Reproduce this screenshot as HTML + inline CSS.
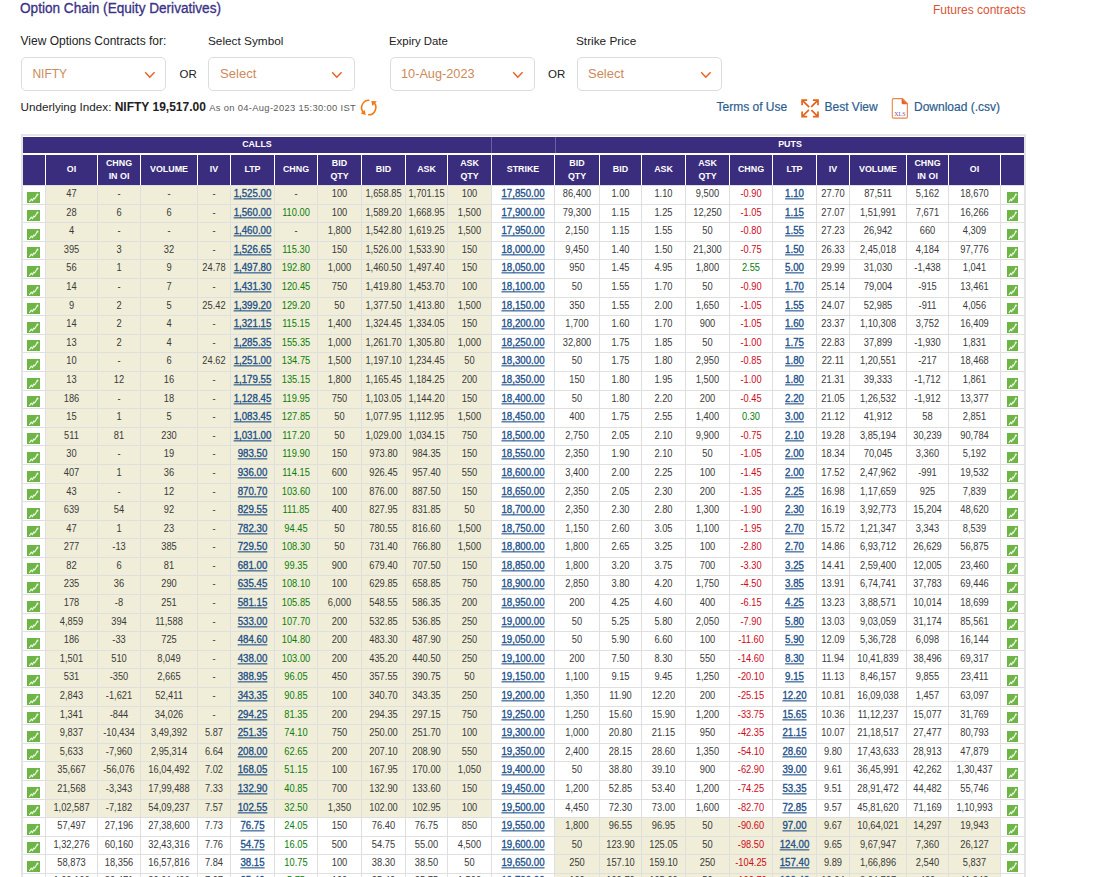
<!DOCTYPE html><html><head><meta charset="utf-8"><style>
html,body{margin:0;padding:0;background:#fff;}
body{width:1117px;height:877px;overflow:hidden;position:relative;font-family:"Liberation Sans", sans-serif;}
.a{position:absolute;white-space:nowrap;}
.c{position:absolute;text-align:center;white-space:nowrap;line-height:12px;height:12px;font-size:9.3px;color:#3a3a3a;transform:scaleY(1.08);}
.k{color:#1c4f8a;text-decoration:underline;text-decoration-thickness:1px;text-underline-offset:1.4px;font-size:9.7px;-webkit-text-stroke:0.3px #1c4f8a;}
.g{color:#0b7d0b}.r{color:#cf0a1a}
.h{position:absolute;text-align:center;color:#fff;font-weight:bold;font-size:8.9px;line-height:12.5px;white-space:nowrap;transform:scaleY(1.1);}.h2{line-height:11.9px;}
.bx{position:absolute;border:1px solid #dcdcdc;border-radius:5px;box-sizing:border-box;background:#fff;}
.sv{position:absolute;color:#cd8a5a;font-size:12px;white-space:nowrap;}
</style></head><body>
<div class="a" style="left:20px;top:1.2px;font-size:13.6px;line-height:16px;color:#3a3285;transform:scaleY(1.1);transform-origin:0 8.5px;-webkit-text-stroke:0.3px #3a3285;">Option Chain (Equity Derivatives)</div>
<div class="a" style="left:933px;top:3px;font-size:12px;line-height:14px;color:#d95436;">Futures contracts</div>
<div class="a" style="left:20.5px;top:34px;font-size:12px;line-height:14px;color:#222;">View Options Contracts for:</div>
<div class="a" style="left:208px;top:34px;font-size:11.8px;line-height:14px;color:#222;">Select Symbol</div>
<div class="a" style="left:389px;top:34px;font-size:11.4px;line-height:14px;color:#222;">Expiry Date</div>
<div class="a" style="left:576px;top:34px;font-size:11.8px;line-height:14px;color:#222;">Strike Price</div>
<div class="bx" style="left:21px;top:57px;width:145px;height:34px;"></div>
<div class="sv" style="left:32.4px;top:66.8px;line-height:14px;transform:scaleX(1.0);transform-origin:0 0;">NIFTY</div>
<svg class="a" style="left:144px;top:70.5px" width="13" height="9" viewBox="0 0 13 9"><polyline points="1.2,1.2 5.8,6.2 10.6,1.2" fill="none" stroke="#e8651f" stroke-width="1.5"/></svg>
<div class="bx" style="left:208px;top:57px;width:146.5px;height:34px;"></div>
<div class="sv" style="left:219.7px;top:66.8px;line-height:14px;transform:scaleX(1.09);transform-origin:0 0;">Select</div>
<svg class="a" style="left:330.5px;top:70.5px" width="13" height="9" viewBox="0 0 13 9"><polyline points="1.2,1.2 5.8,6.2 10.6,1.2" fill="none" stroke="#e8651f" stroke-width="1.5"/></svg>
<div class="bx" style="left:389.5px;top:57px;width:145px;height:34px;"></div>
<div class="sv" style="left:400.6px;top:66.8px;line-height:14px;transform:scaleX(1.06);transform-origin:0 0;">10-Aug-2023</div>
<svg class="a" style="left:511.5px;top:70.5px" width="13" height="9" viewBox="0 0 13 9"><polyline points="1.2,1.2 5.8,6.2 10.6,1.2" fill="none" stroke="#e8651f" stroke-width="1.5"/></svg>
<div class="bx" style="left:576.5px;top:57px;width:145.5px;height:34px;"></div>
<div class="sv" style="left:588.3px;top:66.8px;line-height:14px;transform:scaleX(1.08);transform-origin:0 0;">Select</div>
<svg class="a" style="left:700px;top:70.5px" width="13" height="9" viewBox="0 0 13 9"><polyline points="1.2,1.2 5.8,6.2 10.6,1.2" fill="none" stroke="#e8651f" stroke-width="1.5"/></svg>
<div class="a" style="left:179.5px;top:67px;font-size:11.5px;line-height:14px;color:#222;">OR</div>
<div class="a" style="left:548px;top:67px;font-size:11.5px;line-height:14px;color:#222;">OR</div>
<div class="a" style="left:20.5px;top:99.8px;font-size:11.7px;line-height:14px;color:#222;">Underlying Index: <b style="font-size:12px">NIFTY 19,517.00</b> <span style="font-size:9.4px;letter-spacing:0.33px;color:#5c5c5c;">As on 04-Aug-2023 15:30:00 IST</span></div>
<svg class="a" style="left:355px;top:96px" width="28" height="24" viewBox="0 0 28 24" fill="none" stroke="#f47a14" stroke-width="1.6"><path d="M14.3 4.3 A7.3 7.3 0 0 0 8.6 16.6"/><path d="M13.1 18.8 A7.3 7.3 0 0 0 18.4 6.1"/><path d="M5.7 17.6 L10.8 18.9 L9.7 13.9 Z" fill="#f47a14" stroke="none"/><path d="M16.3 4.9 L21.9 5.2 L17.4 10.0 Z" fill="#f47a14" stroke="none"/></svg>
<div class="a" style="left:716.5px;top:100px;font-size:12px;line-height:14px;color:#2c5e92;-webkit-text-stroke:0.2px #2c5e92;">Terms of Use</div>
<svg class="a" style="left:798px;top:96px" width="24" height="24" viewBox="0 0 24 24" fill="none" stroke="#e5631c" stroke-width="1.7" stroke-linecap="butt"><path d="M4.1 9.2V4.1h5.1M4.6 4.6l6.6 6.6"/><path d="M20 9.2V4.1h-5.1M19.5 4.6l-6.3 6.3"/><path d="M4.1 15.6v5.1h5.1M4.6 20.2l6.3-6.3"/><path d="M20 15.6v5.1h-5.1M19.5 20.2l-6.1-6.1"/></svg>
<div class="a" style="left:824.5px;top:100.3px;font-size:12px;line-height:14px;color:#2c5e92;-webkit-text-stroke:0.2px #2c5e92;">Best View</div>
<svg class="a" style="left:886px;top:94px" width="26" height="28" viewBox="0 0 26 28"><path d="M6.3 5.8 Q6.3 4.6 7.5 4.6 H16.6 L21.4 9.4 V23 Q21.4 24.1 20.2 24.1 H7.5 Q6.3 24.1 6.3 23 Z" fill="#fff" stroke="#ec8548" stroke-width="1.1"/><path d="M15.6 4.2 L21.7 10.3 H17.2 Q15.6 10.3 15.6 8.7 Z" fill="#e5632a"/><text x="13.9" y="22" text-anchor="middle" font-family="Liberation Serif" font-size="6" fill="#7d4f9a">XLS</text></svg>
<div class="a" style="left:914px;top:100.3px;font-size:12px;line-height:14px;color:#2c5e92;-webkit-text-stroke:0.2px #2c5e92;">Download (.csv)</div>
<div class="a" style="left:21px;top:134px;width:1005px;height:743px;background:#e4e4e4;"></div>
<div class="a" style="left:23px;top:136px;width:1001px;height:49px;background:#fff;"></div>
<div class="a" style="left:23px;top:185px;width:1001px;height:692px;background:#dfdfdf;"></div>
<div class="a" style="left:23px;top:137px;width:1001px;height:16px;background:#3b2d7d;"></div>
<div class="a" style="left:491px;top:137px;width:1px;height:16px;background:#6a5f9f;"></div>
<div class="a" style="left:555px;top:137px;width:1px;height:16px;background:#6a5f9f;"></div>
<div class="h" style="left:23px;top:138.2px;width:468px;">CALLS</div>
<div class="h" style="left:556px;top:138.2px;width:468px;">PUTS</div>
<div class="a" style="left:23px;top:155px;width:22px;height:30px;background:#3b2d7d;"></div>
<div class="a" style="left:46px;top:155px;width:51px;height:30px;background:#3b2d7d;"></div>
<div class="h" style="left:46px;top:162.6px;width:51px;">OI</div>
<div class="a" style="left:98px;top:155px;width:42px;height:30px;background:#3b2d7d;"></div>
<div class="h h2" style="left:98px;top:157.6px;width:42px;">CHNG<br>IN OI</div>
<div class="a" style="left:141px;top:155px;width:56px;height:30px;background:#3b2d7d;"></div>
<div class="h" style="left:141px;top:162.6px;width:56px;">VOLUME</div>
<div class="a" style="left:198px;top:155px;width:32px;height:30px;background:#3b2d7d;"></div>
<div class="h" style="left:198px;top:162.6px;width:32px;">IV</div>
<div class="a" style="left:231px;top:155px;width:43px;height:30px;background:#3b2d7d;"></div>
<div class="h" style="left:231px;top:162.6px;width:43px;">LTP</div>
<div class="a" style="left:275px;top:155px;width:42px;height:30px;background:#3b2d7d;"></div>
<div class="h" style="left:275px;top:162.6px;width:42px;">CHNG</div>
<div class="a" style="left:318px;top:155px;width:43px;height:30px;background:#3b2d7d;"></div>
<div class="h h2" style="left:318px;top:157.6px;width:43px;">BID<br>QTY</div>
<div class="a" style="left:362px;top:155px;width:43px;height:30px;background:#3b2d7d;"></div>
<div class="h" style="left:362px;top:162.6px;width:43px;">BID</div>
<div class="a" style="left:406px;top:155px;width:41px;height:30px;background:#3b2d7d;"></div>
<div class="h" style="left:406px;top:162.6px;width:41px;">ASK</div>
<div class="a" style="left:448px;top:155px;width:43px;height:30px;background:#3b2d7d;"></div>
<div class="h h2" style="left:448px;top:157.6px;width:43px;">ASK<br>QTY</div>
<div class="a" style="left:492px;top:155px;width:62px;height:30px;background:#3b2d7d;"></div>
<div class="h" style="left:492px;top:162.6px;width:62px;">STRIKE</div>
<div class="a" style="left:555px;top:155px;width:44px;height:30px;background:#3b2d7d;"></div>
<div class="h h2" style="left:555px;top:157.6px;width:44px;">BID<br>QTY</div>
<div class="a" style="left:600px;top:155px;width:41px;height:30px;background:#3b2d7d;"></div>
<div class="h" style="left:600px;top:162.6px;width:41px;">BID</div>
<div class="a" style="left:642px;top:155px;width:43px;height:30px;background:#3b2d7d;"></div>
<div class="h" style="left:642px;top:162.6px;width:43px;">ASK</div>
<div class="a" style="left:686px;top:155px;width:43px;height:30px;background:#3b2d7d;"></div>
<div class="h h2" style="left:686px;top:157.6px;width:43px;">ASK<br>QTY</div>
<div class="a" style="left:730px;top:155px;width:42px;height:30px;background:#3b2d7d;"></div>
<div class="h" style="left:730px;top:162.6px;width:42px;">CHNG</div>
<div class="a" style="left:773px;top:155px;width:43px;height:30px;background:#3b2d7d;"></div>
<div class="h" style="left:773px;top:162.6px;width:43px;">LTP</div>
<div class="a" style="left:817px;top:155px;width:32px;height:30px;background:#3b2d7d;"></div>
<div class="h" style="left:817px;top:162.6px;width:32px;">IV</div>
<div class="a" style="left:850px;top:155px;width:56px;height:30px;background:#3b2d7d;"></div>
<div class="h" style="left:850px;top:162.6px;width:56px;">VOLUME</div>
<div class="a" style="left:907px;top:155px;width:41px;height:30px;background:#3b2d7d;"></div>
<div class="h h2" style="left:907px;top:157.6px;width:41px;">CHNG<br>IN OI</div>
<div class="a" style="left:949px;top:155px;width:51px;height:30px;background:#3b2d7d;"></div>
<div class="h" style="left:949px;top:162.6px;width:51px;">OI</div>
<div class="a" style="left:1001px;top:155px;width:23px;height:30px;background:#3b2d7d;"></div>
<div class="a" style="left:23px;top:186px;width:22px;height:18px;background:#fff;"></div>
<div class="a" style="left:46px;top:186px;width:51px;height:18px;background:#f0eed8;"></div>
<div class="a" style="left:98px;top:186px;width:42px;height:18px;background:#f0eed8;"></div>
<div class="a" style="left:141px;top:186px;width:56px;height:18px;background:#f0eed8;"></div>
<div class="a" style="left:198px;top:186px;width:32px;height:18px;background:#f0eed8;"></div>
<div class="a" style="left:231px;top:186px;width:43px;height:18px;background:#f0eed8;"></div>
<div class="a" style="left:275px;top:186px;width:42px;height:18px;background:#f0eed8;"></div>
<div class="a" style="left:318px;top:186px;width:43px;height:18px;background:#f0eed8;"></div>
<div class="a" style="left:362px;top:186px;width:43px;height:18px;background:#f0eed8;"></div>
<div class="a" style="left:406px;top:186px;width:41px;height:18px;background:#f0eed8;"></div>
<div class="a" style="left:448px;top:186px;width:43px;height:18px;background:#f0eed8;"></div>
<div class="a" style="left:492px;top:186px;width:62px;height:18px;background:#fff;"></div>
<div class="a" style="left:555px;top:186px;width:44px;height:18px;background:#fff;"></div>
<div class="a" style="left:600px;top:186px;width:41px;height:18px;background:#fff;"></div>
<div class="a" style="left:642px;top:186px;width:43px;height:18px;background:#fff;"></div>
<div class="a" style="left:686px;top:186px;width:43px;height:18px;background:#fff;"></div>
<div class="a" style="left:730px;top:186px;width:42px;height:18px;background:#fff;"></div>
<div class="a" style="left:773px;top:186px;width:43px;height:18px;background:#fff;"></div>
<div class="a" style="left:817px;top:186px;width:32px;height:18px;background:#fff;"></div>
<div class="a" style="left:850px;top:186px;width:56px;height:18px;background:#fff;"></div>
<div class="a" style="left:907px;top:186px;width:41px;height:18px;background:#fff;"></div>
<div class="a" style="left:949px;top:186px;width:51px;height:18px;background:#fff;"></div>
<div class="a" style="left:1001px;top:186px;width:23px;height:18px;background:#fff;"></div>
<svg class="a" style="left:27px;top:191.7px" width="13" height="11" viewBox="0 0 13 11"><rect width="13" height="11" fill="#6db545"/><polyline points="2.60,9.50 4.30,7.20 5.50,8.70 6.70,6.10 7.60,6.90 10.30,2.80" fill="none" stroke="#f2f8ec" stroke-width="1.15" stroke-linejoin="round" stroke-linecap="round"/><circle cx="10.50" cy="2.5" r="1.0" fill="#f2f8ec"/></svg>
<svg class="a" style="left:1007px;top:191.7px" width="11" height="11" viewBox="0 0 11 11"><rect width="11" height="11" fill="#6db545"/><polyline points="2.20,9.50 3.64,7.20 4.65,8.70 5.67,6.10 6.43,6.90 8.72,2.80" fill="none" stroke="#f2f8ec" stroke-width="1.15" stroke-linejoin="round" stroke-linecap="round"/><circle cx="8.88" cy="2.5" r="1.0" fill="#f2f8ec"/></svg>
<div class="c" style="left:46px;top:187.70px;width:51px;">47</div>
<div class="c" style="left:98px;top:187.70px;width:42px;">-</div>
<div class="c" style="left:141px;top:187.70px;width:56px;">-</div>
<div class="c" style="left:198px;top:187.70px;width:32px;">-</div>
<div class="c" style="left:231px;top:187.70px;width:43px;"><span class="k">1,525.00</span></div>
<div class="c" style="left:275px;top:187.70px;width:42px;">-</div>
<div class="c" style="left:318px;top:187.70px;width:43px;">100</div>
<div class="c" style="left:362px;top:187.70px;width:43px;">1,658.85</div>
<div class="c" style="left:406px;top:187.70px;width:41px;">1,701.15</div>
<div class="c" style="left:448px;top:187.70px;width:43px;">100</div>
<div class="c" style="left:492px;top:187.70px;width:62px;"><span class="k">17,850.00</span></div>
<div class="c" style="left:555px;top:187.70px;width:44px;">86,400</div>
<div class="c" style="left:600px;top:187.70px;width:41px;">1.00</div>
<div class="c" style="left:642px;top:187.70px;width:43px;">1.10</div>
<div class="c" style="left:686px;top:187.70px;width:43px;">9,500</div>
<div class="c r" style="left:730px;top:187.70px;width:42px;">-0.90</div>
<div class="c" style="left:773px;top:187.70px;width:43px;"><span class="k">1.10</span></div>
<div class="c" style="left:817px;top:187.70px;width:32px;">27.70</div>
<div class="c" style="left:850px;top:187.70px;width:56px;">87,511</div>
<div class="c" style="left:907px;top:187.70px;width:41px;">5,162</div>
<div class="c" style="left:949px;top:187.70px;width:51px;">18,670</div>
<div class="a" style="left:23px;top:205px;width:22px;height:17px;background:#fff;"></div>
<div class="a" style="left:46px;top:205px;width:51px;height:17px;background:#f0eed8;"></div>
<div class="a" style="left:98px;top:205px;width:42px;height:17px;background:#f0eed8;"></div>
<div class="a" style="left:141px;top:205px;width:56px;height:17px;background:#f0eed8;"></div>
<div class="a" style="left:198px;top:205px;width:32px;height:17px;background:#f0eed8;"></div>
<div class="a" style="left:231px;top:205px;width:43px;height:17px;background:#f0eed8;"></div>
<div class="a" style="left:275px;top:205px;width:42px;height:17px;background:#f0eed8;"></div>
<div class="a" style="left:318px;top:205px;width:43px;height:17px;background:#f0eed8;"></div>
<div class="a" style="left:362px;top:205px;width:43px;height:17px;background:#f0eed8;"></div>
<div class="a" style="left:406px;top:205px;width:41px;height:17px;background:#f0eed8;"></div>
<div class="a" style="left:448px;top:205px;width:43px;height:17px;background:#f0eed8;"></div>
<div class="a" style="left:492px;top:205px;width:62px;height:17px;background:#fff;"></div>
<div class="a" style="left:555px;top:205px;width:44px;height:17px;background:#fff;"></div>
<div class="a" style="left:600px;top:205px;width:41px;height:17px;background:#fff;"></div>
<div class="a" style="left:642px;top:205px;width:43px;height:17px;background:#fff;"></div>
<div class="a" style="left:686px;top:205px;width:43px;height:17px;background:#fff;"></div>
<div class="a" style="left:730px;top:205px;width:42px;height:17px;background:#fff;"></div>
<div class="a" style="left:773px;top:205px;width:43px;height:17px;background:#fff;"></div>
<div class="a" style="left:817px;top:205px;width:32px;height:17px;background:#fff;"></div>
<div class="a" style="left:850px;top:205px;width:56px;height:17px;background:#fff;"></div>
<div class="a" style="left:907px;top:205px;width:41px;height:17px;background:#fff;"></div>
<div class="a" style="left:949px;top:205px;width:51px;height:17px;background:#fff;"></div>
<div class="a" style="left:1001px;top:205px;width:23px;height:17px;background:#fff;"></div>
<svg class="a" style="left:27px;top:209.7px" width="13" height="11" viewBox="0 0 13 11"><rect width="13" height="11" fill="#6db545"/><polyline points="2.60,9.50 4.30,7.20 5.50,8.70 6.70,6.10 7.60,6.90 10.30,2.80" fill="none" stroke="#f2f8ec" stroke-width="1.15" stroke-linejoin="round" stroke-linecap="round"/><circle cx="10.50" cy="2.5" r="1.0" fill="#f2f8ec"/></svg>
<svg class="a" style="left:1007px;top:209.7px" width="11" height="11" viewBox="0 0 11 11"><rect width="11" height="11" fill="#6db545"/><polyline points="2.20,9.50 3.64,7.20 4.65,8.70 5.67,6.10 6.43,6.90 8.72,2.80" fill="none" stroke="#f2f8ec" stroke-width="1.15" stroke-linejoin="round" stroke-linecap="round"/><circle cx="8.88" cy="2.5" r="1.0" fill="#f2f8ec"/></svg>
<div class="c" style="left:46px;top:206.70px;width:51px;">28</div>
<div class="c" style="left:98px;top:206.70px;width:42px;">6</div>
<div class="c" style="left:141px;top:206.70px;width:56px;">6</div>
<div class="c" style="left:198px;top:206.70px;width:32px;">-</div>
<div class="c" style="left:231px;top:206.70px;width:43px;"><span class="k">1,560.00</span></div>
<div class="c g" style="left:275px;top:206.70px;width:42px;">110.00</div>
<div class="c" style="left:318px;top:206.70px;width:43px;">100</div>
<div class="c" style="left:362px;top:206.70px;width:43px;">1,589.20</div>
<div class="c" style="left:406px;top:206.70px;width:41px;">1,668.95</div>
<div class="c" style="left:448px;top:206.70px;width:43px;">1,500</div>
<div class="c" style="left:492px;top:206.70px;width:62px;"><span class="k">17,900.00</span></div>
<div class="c" style="left:555px;top:206.70px;width:44px;">79,300</div>
<div class="c" style="left:600px;top:206.70px;width:41px;">1.15</div>
<div class="c" style="left:642px;top:206.70px;width:43px;">1.25</div>
<div class="c" style="left:686px;top:206.70px;width:43px;">12,250</div>
<div class="c r" style="left:730px;top:206.70px;width:42px;">-1.05</div>
<div class="c" style="left:773px;top:206.70px;width:43px;"><span class="k">1.15</span></div>
<div class="c" style="left:817px;top:206.70px;width:32px;">27.07</div>
<div class="c" style="left:850px;top:206.70px;width:56px;">1,51,991</div>
<div class="c" style="left:907px;top:206.70px;width:41px;">7,671</div>
<div class="c" style="left:949px;top:206.70px;width:51px;">16,266</div>
<div class="a" style="left:23px;top:223px;width:22px;height:18px;background:#fff;"></div>
<div class="a" style="left:46px;top:223px;width:51px;height:18px;background:#f0eed8;"></div>
<div class="a" style="left:98px;top:223px;width:42px;height:18px;background:#f0eed8;"></div>
<div class="a" style="left:141px;top:223px;width:56px;height:18px;background:#f0eed8;"></div>
<div class="a" style="left:198px;top:223px;width:32px;height:18px;background:#f0eed8;"></div>
<div class="a" style="left:231px;top:223px;width:43px;height:18px;background:#f0eed8;"></div>
<div class="a" style="left:275px;top:223px;width:42px;height:18px;background:#f0eed8;"></div>
<div class="a" style="left:318px;top:223px;width:43px;height:18px;background:#f0eed8;"></div>
<div class="a" style="left:362px;top:223px;width:43px;height:18px;background:#f0eed8;"></div>
<div class="a" style="left:406px;top:223px;width:41px;height:18px;background:#f0eed8;"></div>
<div class="a" style="left:448px;top:223px;width:43px;height:18px;background:#f0eed8;"></div>
<div class="a" style="left:492px;top:223px;width:62px;height:18px;background:#fff;"></div>
<div class="a" style="left:555px;top:223px;width:44px;height:18px;background:#fff;"></div>
<div class="a" style="left:600px;top:223px;width:41px;height:18px;background:#fff;"></div>
<div class="a" style="left:642px;top:223px;width:43px;height:18px;background:#fff;"></div>
<div class="a" style="left:686px;top:223px;width:43px;height:18px;background:#fff;"></div>
<div class="a" style="left:730px;top:223px;width:42px;height:18px;background:#fff;"></div>
<div class="a" style="left:773px;top:223px;width:43px;height:18px;background:#fff;"></div>
<div class="a" style="left:817px;top:223px;width:32px;height:18px;background:#fff;"></div>
<div class="a" style="left:850px;top:223px;width:56px;height:18px;background:#fff;"></div>
<div class="a" style="left:907px;top:223px;width:41px;height:18px;background:#fff;"></div>
<div class="a" style="left:949px;top:223px;width:51px;height:18px;background:#fff;"></div>
<div class="a" style="left:1001px;top:223px;width:23px;height:18px;background:#fff;"></div>
<svg class="a" style="left:27px;top:228.7px" width="13" height="11" viewBox="0 0 13 11"><rect width="13" height="11" fill="#6db545"/><polyline points="2.60,9.50 4.30,7.20 5.50,8.70 6.70,6.10 7.60,6.90 10.30,2.80" fill="none" stroke="#f2f8ec" stroke-width="1.15" stroke-linejoin="round" stroke-linecap="round"/><circle cx="10.50" cy="2.5" r="1.0" fill="#f2f8ec"/></svg>
<svg class="a" style="left:1007px;top:228.7px" width="11" height="11" viewBox="0 0 11 11"><rect width="11" height="11" fill="#6db545"/><polyline points="2.20,9.50 3.64,7.20 4.65,8.70 5.67,6.10 6.43,6.90 8.72,2.80" fill="none" stroke="#f2f8ec" stroke-width="1.15" stroke-linejoin="round" stroke-linecap="round"/><circle cx="8.88" cy="2.5" r="1.0" fill="#f2f8ec"/></svg>
<div class="c" style="left:46px;top:224.70px;width:51px;">4</div>
<div class="c" style="left:98px;top:224.70px;width:42px;">-</div>
<div class="c" style="left:141px;top:224.70px;width:56px;">-</div>
<div class="c" style="left:198px;top:224.70px;width:32px;">-</div>
<div class="c" style="left:231px;top:224.70px;width:43px;"><span class="k">1,460.00</span></div>
<div class="c" style="left:275px;top:224.70px;width:42px;">-</div>
<div class="c" style="left:318px;top:224.70px;width:43px;">1,800</div>
<div class="c" style="left:362px;top:224.70px;width:43px;">1,542.80</div>
<div class="c" style="left:406px;top:224.70px;width:41px;">1,619.25</div>
<div class="c" style="left:448px;top:224.70px;width:43px;">1,500</div>
<div class="c" style="left:492px;top:224.70px;width:62px;"><span class="k">17,950.00</span></div>
<div class="c" style="left:555px;top:224.70px;width:44px;">2,150</div>
<div class="c" style="left:600px;top:224.70px;width:41px;">1.15</div>
<div class="c" style="left:642px;top:224.70px;width:43px;">1.55</div>
<div class="c" style="left:686px;top:224.70px;width:43px;">50</div>
<div class="c r" style="left:730px;top:224.70px;width:42px;">-0.80</div>
<div class="c" style="left:773px;top:224.70px;width:43px;"><span class="k">1.55</span></div>
<div class="c" style="left:817px;top:224.70px;width:32px;">27.23</div>
<div class="c" style="left:850px;top:224.70px;width:56px;">26,942</div>
<div class="c" style="left:907px;top:224.70px;width:41px;">660</div>
<div class="c" style="left:949px;top:224.70px;width:51px;">4,309</div>
<div class="a" style="left:23px;top:242px;width:22px;height:17px;background:#fff;"></div>
<div class="a" style="left:46px;top:242px;width:51px;height:17px;background:#f0eed8;"></div>
<div class="a" style="left:98px;top:242px;width:42px;height:17px;background:#f0eed8;"></div>
<div class="a" style="left:141px;top:242px;width:56px;height:17px;background:#f0eed8;"></div>
<div class="a" style="left:198px;top:242px;width:32px;height:17px;background:#f0eed8;"></div>
<div class="a" style="left:231px;top:242px;width:43px;height:17px;background:#f0eed8;"></div>
<div class="a" style="left:275px;top:242px;width:42px;height:17px;background:#f0eed8;"></div>
<div class="a" style="left:318px;top:242px;width:43px;height:17px;background:#f0eed8;"></div>
<div class="a" style="left:362px;top:242px;width:43px;height:17px;background:#f0eed8;"></div>
<div class="a" style="left:406px;top:242px;width:41px;height:17px;background:#f0eed8;"></div>
<div class="a" style="left:448px;top:242px;width:43px;height:17px;background:#f0eed8;"></div>
<div class="a" style="left:492px;top:242px;width:62px;height:17px;background:#fff;"></div>
<div class="a" style="left:555px;top:242px;width:44px;height:17px;background:#fff;"></div>
<div class="a" style="left:600px;top:242px;width:41px;height:17px;background:#fff;"></div>
<div class="a" style="left:642px;top:242px;width:43px;height:17px;background:#fff;"></div>
<div class="a" style="left:686px;top:242px;width:43px;height:17px;background:#fff;"></div>
<div class="a" style="left:730px;top:242px;width:42px;height:17px;background:#fff;"></div>
<div class="a" style="left:773px;top:242px;width:43px;height:17px;background:#fff;"></div>
<div class="a" style="left:817px;top:242px;width:32px;height:17px;background:#fff;"></div>
<div class="a" style="left:850px;top:242px;width:56px;height:17px;background:#fff;"></div>
<div class="a" style="left:907px;top:242px;width:41px;height:17px;background:#fff;"></div>
<div class="a" style="left:949px;top:242px;width:51px;height:17px;background:#fff;"></div>
<div class="a" style="left:1001px;top:242px;width:23px;height:17px;background:#fff;"></div>
<svg class="a" style="left:27px;top:246.7px" width="13" height="11" viewBox="0 0 13 11"><rect width="13" height="11" fill="#6db545"/><polyline points="2.60,9.50 4.30,7.20 5.50,8.70 6.70,6.10 7.60,6.90 10.30,2.80" fill="none" stroke="#f2f8ec" stroke-width="1.15" stroke-linejoin="round" stroke-linecap="round"/><circle cx="10.50" cy="2.5" r="1.0" fill="#f2f8ec"/></svg>
<svg class="a" style="left:1007px;top:246.7px" width="11" height="11" viewBox="0 0 11 11"><rect width="11" height="11" fill="#6db545"/><polyline points="2.20,9.50 3.64,7.20 4.65,8.70 5.67,6.10 6.43,6.90 8.72,2.80" fill="none" stroke="#f2f8ec" stroke-width="1.15" stroke-linejoin="round" stroke-linecap="round"/><circle cx="8.88" cy="2.5" r="1.0" fill="#f2f8ec"/></svg>
<div class="c" style="left:46px;top:243.70px;width:51px;">395</div>
<div class="c" style="left:98px;top:243.70px;width:42px;">3</div>
<div class="c" style="left:141px;top:243.70px;width:56px;">32</div>
<div class="c" style="left:198px;top:243.70px;width:32px;">-</div>
<div class="c" style="left:231px;top:243.70px;width:43px;"><span class="k">1,526.65</span></div>
<div class="c g" style="left:275px;top:243.70px;width:42px;">115.30</div>
<div class="c" style="left:318px;top:243.70px;width:43px;">150</div>
<div class="c" style="left:362px;top:243.70px;width:43px;">1,526.00</div>
<div class="c" style="left:406px;top:243.70px;width:41px;">1,533.90</div>
<div class="c" style="left:448px;top:243.70px;width:43px;">150</div>
<div class="c" style="left:492px;top:243.70px;width:62px;"><span class="k">18,000.00</span></div>
<div class="c" style="left:555px;top:243.70px;width:44px;">9,450</div>
<div class="c" style="left:600px;top:243.70px;width:41px;">1.40</div>
<div class="c" style="left:642px;top:243.70px;width:43px;">1.50</div>
<div class="c" style="left:686px;top:243.70px;width:43px;">21,300</div>
<div class="c r" style="left:730px;top:243.70px;width:42px;">-0.75</div>
<div class="c" style="left:773px;top:243.70px;width:43px;"><span class="k">1.50</span></div>
<div class="c" style="left:817px;top:243.70px;width:32px;">26.33</div>
<div class="c" style="left:850px;top:243.70px;width:56px;">2,45,018</div>
<div class="c" style="left:907px;top:243.70px;width:41px;">4,184</div>
<div class="c" style="left:949px;top:243.70px;width:51px;">97,776</div>
<div class="a" style="left:23px;top:260px;width:22px;height:18px;background:#fff;"></div>
<div class="a" style="left:46px;top:260px;width:51px;height:18px;background:#f0eed8;"></div>
<div class="a" style="left:98px;top:260px;width:42px;height:18px;background:#f0eed8;"></div>
<div class="a" style="left:141px;top:260px;width:56px;height:18px;background:#f0eed8;"></div>
<div class="a" style="left:198px;top:260px;width:32px;height:18px;background:#f0eed8;"></div>
<div class="a" style="left:231px;top:260px;width:43px;height:18px;background:#f0eed8;"></div>
<div class="a" style="left:275px;top:260px;width:42px;height:18px;background:#f0eed8;"></div>
<div class="a" style="left:318px;top:260px;width:43px;height:18px;background:#f0eed8;"></div>
<div class="a" style="left:362px;top:260px;width:43px;height:18px;background:#f0eed8;"></div>
<div class="a" style="left:406px;top:260px;width:41px;height:18px;background:#f0eed8;"></div>
<div class="a" style="left:448px;top:260px;width:43px;height:18px;background:#f0eed8;"></div>
<div class="a" style="left:492px;top:260px;width:62px;height:18px;background:#fff;"></div>
<div class="a" style="left:555px;top:260px;width:44px;height:18px;background:#fff;"></div>
<div class="a" style="left:600px;top:260px;width:41px;height:18px;background:#fff;"></div>
<div class="a" style="left:642px;top:260px;width:43px;height:18px;background:#fff;"></div>
<div class="a" style="left:686px;top:260px;width:43px;height:18px;background:#fff;"></div>
<div class="a" style="left:730px;top:260px;width:42px;height:18px;background:#fff;"></div>
<div class="a" style="left:773px;top:260px;width:43px;height:18px;background:#fff;"></div>
<div class="a" style="left:817px;top:260px;width:32px;height:18px;background:#fff;"></div>
<div class="a" style="left:850px;top:260px;width:56px;height:18px;background:#fff;"></div>
<div class="a" style="left:907px;top:260px;width:41px;height:18px;background:#fff;"></div>
<div class="a" style="left:949px;top:260px;width:51px;height:18px;background:#fff;"></div>
<div class="a" style="left:1001px;top:260px;width:23px;height:18px;background:#fff;"></div>
<svg class="a" style="left:27px;top:265.7px" width="13" height="11" viewBox="0 0 13 11"><rect width="13" height="11" fill="#6db545"/><polyline points="2.60,9.50 4.30,7.20 5.50,8.70 6.70,6.10 7.60,6.90 10.30,2.80" fill="none" stroke="#f2f8ec" stroke-width="1.15" stroke-linejoin="round" stroke-linecap="round"/><circle cx="10.50" cy="2.5" r="1.0" fill="#f2f8ec"/></svg>
<svg class="a" style="left:1007px;top:265.7px" width="11" height="11" viewBox="0 0 11 11"><rect width="11" height="11" fill="#6db545"/><polyline points="2.20,9.50 3.64,7.20 4.65,8.70 5.67,6.10 6.43,6.90 8.72,2.80" fill="none" stroke="#f2f8ec" stroke-width="1.15" stroke-linejoin="round" stroke-linecap="round"/><circle cx="8.88" cy="2.5" r="1.0" fill="#f2f8ec"/></svg>
<div class="c" style="left:46px;top:261.70px;width:51px;">56</div>
<div class="c" style="left:98px;top:261.70px;width:42px;">1</div>
<div class="c" style="left:141px;top:261.70px;width:56px;">9</div>
<div class="c" style="left:198px;top:261.70px;width:32px;">24.78</div>
<div class="c" style="left:231px;top:261.70px;width:43px;"><span class="k">1,497.80</span></div>
<div class="c g" style="left:275px;top:261.70px;width:42px;">192.80</div>
<div class="c" style="left:318px;top:261.70px;width:43px;">1,000</div>
<div class="c" style="left:362px;top:261.70px;width:43px;">1,460.50</div>
<div class="c" style="left:406px;top:261.70px;width:41px;">1,497.40</div>
<div class="c" style="left:448px;top:261.70px;width:43px;">150</div>
<div class="c" style="left:492px;top:261.70px;width:62px;"><span class="k">18,050.00</span></div>
<div class="c" style="left:555px;top:261.70px;width:44px;">950</div>
<div class="c" style="left:600px;top:261.70px;width:41px;">1.45</div>
<div class="c" style="left:642px;top:261.70px;width:43px;">4.95</div>
<div class="c" style="left:686px;top:261.70px;width:43px;">1,800</div>
<div class="c g" style="left:730px;top:261.70px;width:42px;">2.55</div>
<div class="c" style="left:773px;top:261.70px;width:43px;"><span class="k">5.00</span></div>
<div class="c" style="left:817px;top:261.70px;width:32px;">29.99</div>
<div class="c" style="left:850px;top:261.70px;width:56px;">31,030</div>
<div class="c" style="left:907px;top:261.70px;width:41px;">-1,438</div>
<div class="c" style="left:949px;top:261.70px;width:51px;">1,041</div>
<div class="a" style="left:23px;top:279px;width:22px;height:18px;background:#fff;"></div>
<div class="a" style="left:46px;top:279px;width:51px;height:18px;background:#f0eed8;"></div>
<div class="a" style="left:98px;top:279px;width:42px;height:18px;background:#f0eed8;"></div>
<div class="a" style="left:141px;top:279px;width:56px;height:18px;background:#f0eed8;"></div>
<div class="a" style="left:198px;top:279px;width:32px;height:18px;background:#f0eed8;"></div>
<div class="a" style="left:231px;top:279px;width:43px;height:18px;background:#f0eed8;"></div>
<div class="a" style="left:275px;top:279px;width:42px;height:18px;background:#f0eed8;"></div>
<div class="a" style="left:318px;top:279px;width:43px;height:18px;background:#f0eed8;"></div>
<div class="a" style="left:362px;top:279px;width:43px;height:18px;background:#f0eed8;"></div>
<div class="a" style="left:406px;top:279px;width:41px;height:18px;background:#f0eed8;"></div>
<div class="a" style="left:448px;top:279px;width:43px;height:18px;background:#f0eed8;"></div>
<div class="a" style="left:492px;top:279px;width:62px;height:18px;background:#fff;"></div>
<div class="a" style="left:555px;top:279px;width:44px;height:18px;background:#fff;"></div>
<div class="a" style="left:600px;top:279px;width:41px;height:18px;background:#fff;"></div>
<div class="a" style="left:642px;top:279px;width:43px;height:18px;background:#fff;"></div>
<div class="a" style="left:686px;top:279px;width:43px;height:18px;background:#fff;"></div>
<div class="a" style="left:730px;top:279px;width:42px;height:18px;background:#fff;"></div>
<div class="a" style="left:773px;top:279px;width:43px;height:18px;background:#fff;"></div>
<div class="a" style="left:817px;top:279px;width:32px;height:18px;background:#fff;"></div>
<div class="a" style="left:850px;top:279px;width:56px;height:18px;background:#fff;"></div>
<div class="a" style="left:907px;top:279px;width:41px;height:18px;background:#fff;"></div>
<div class="a" style="left:949px;top:279px;width:51px;height:18px;background:#fff;"></div>
<div class="a" style="left:1001px;top:279px;width:23px;height:18px;background:#fff;"></div>
<svg class="a" style="left:27px;top:284.7px" width="13" height="11" viewBox="0 0 13 11"><rect width="13" height="11" fill="#6db545"/><polyline points="2.60,9.50 4.30,7.20 5.50,8.70 6.70,6.10 7.60,6.90 10.30,2.80" fill="none" stroke="#f2f8ec" stroke-width="1.15" stroke-linejoin="round" stroke-linecap="round"/><circle cx="10.50" cy="2.5" r="1.0" fill="#f2f8ec"/></svg>
<svg class="a" style="left:1007px;top:284.7px" width="11" height="11" viewBox="0 0 11 11"><rect width="11" height="11" fill="#6db545"/><polyline points="2.20,9.50 3.64,7.20 4.65,8.70 5.67,6.10 6.43,6.90 8.72,2.80" fill="none" stroke="#f2f8ec" stroke-width="1.15" stroke-linejoin="round" stroke-linecap="round"/><circle cx="8.88" cy="2.5" r="1.0" fill="#f2f8ec"/></svg>
<div class="c" style="left:46px;top:280.70px;width:51px;">14</div>
<div class="c" style="left:98px;top:280.70px;width:42px;">-</div>
<div class="c" style="left:141px;top:280.70px;width:56px;">7</div>
<div class="c" style="left:198px;top:280.70px;width:32px;">-</div>
<div class="c" style="left:231px;top:280.70px;width:43px;"><span class="k">1,431.30</span></div>
<div class="c g" style="left:275px;top:280.70px;width:42px;">120.45</div>
<div class="c" style="left:318px;top:280.70px;width:43px;">750</div>
<div class="c" style="left:362px;top:280.70px;width:43px;">1,419.80</div>
<div class="c" style="left:406px;top:280.70px;width:41px;">1,453.70</div>
<div class="c" style="left:448px;top:280.70px;width:43px;">100</div>
<div class="c" style="left:492px;top:280.70px;width:62px;"><span class="k">18,100.00</span></div>
<div class="c" style="left:555px;top:280.70px;width:44px;">50</div>
<div class="c" style="left:600px;top:280.70px;width:41px;">1.55</div>
<div class="c" style="left:642px;top:280.70px;width:43px;">1.70</div>
<div class="c" style="left:686px;top:280.70px;width:43px;">50</div>
<div class="c r" style="left:730px;top:280.70px;width:42px;">-0.90</div>
<div class="c" style="left:773px;top:280.70px;width:43px;"><span class="k">1.70</span></div>
<div class="c" style="left:817px;top:280.70px;width:32px;">25.14</div>
<div class="c" style="left:850px;top:280.70px;width:56px;">79,004</div>
<div class="c" style="left:907px;top:280.70px;width:41px;">-915</div>
<div class="c" style="left:949px;top:280.70px;width:51px;">13,461</div>
<div class="a" style="left:23px;top:298px;width:22px;height:17px;background:#fff;"></div>
<div class="a" style="left:46px;top:298px;width:51px;height:17px;background:#f0eed8;"></div>
<div class="a" style="left:98px;top:298px;width:42px;height:17px;background:#f0eed8;"></div>
<div class="a" style="left:141px;top:298px;width:56px;height:17px;background:#f0eed8;"></div>
<div class="a" style="left:198px;top:298px;width:32px;height:17px;background:#f0eed8;"></div>
<div class="a" style="left:231px;top:298px;width:43px;height:17px;background:#f0eed8;"></div>
<div class="a" style="left:275px;top:298px;width:42px;height:17px;background:#f0eed8;"></div>
<div class="a" style="left:318px;top:298px;width:43px;height:17px;background:#f0eed8;"></div>
<div class="a" style="left:362px;top:298px;width:43px;height:17px;background:#f0eed8;"></div>
<div class="a" style="left:406px;top:298px;width:41px;height:17px;background:#f0eed8;"></div>
<div class="a" style="left:448px;top:298px;width:43px;height:17px;background:#f0eed8;"></div>
<div class="a" style="left:492px;top:298px;width:62px;height:17px;background:#fff;"></div>
<div class="a" style="left:555px;top:298px;width:44px;height:17px;background:#fff;"></div>
<div class="a" style="left:600px;top:298px;width:41px;height:17px;background:#fff;"></div>
<div class="a" style="left:642px;top:298px;width:43px;height:17px;background:#fff;"></div>
<div class="a" style="left:686px;top:298px;width:43px;height:17px;background:#fff;"></div>
<div class="a" style="left:730px;top:298px;width:42px;height:17px;background:#fff;"></div>
<div class="a" style="left:773px;top:298px;width:43px;height:17px;background:#fff;"></div>
<div class="a" style="left:817px;top:298px;width:32px;height:17px;background:#fff;"></div>
<div class="a" style="left:850px;top:298px;width:56px;height:17px;background:#fff;"></div>
<div class="a" style="left:907px;top:298px;width:41px;height:17px;background:#fff;"></div>
<div class="a" style="left:949px;top:298px;width:51px;height:17px;background:#fff;"></div>
<div class="a" style="left:1001px;top:298px;width:23px;height:17px;background:#fff;"></div>
<svg class="a" style="left:27px;top:302.7px" width="13" height="11" viewBox="0 0 13 11"><rect width="13" height="11" fill="#6db545"/><polyline points="2.60,9.50 4.30,7.20 5.50,8.70 6.70,6.10 7.60,6.90 10.30,2.80" fill="none" stroke="#f2f8ec" stroke-width="1.15" stroke-linejoin="round" stroke-linecap="round"/><circle cx="10.50" cy="2.5" r="1.0" fill="#f2f8ec"/></svg>
<svg class="a" style="left:1007px;top:302.7px" width="11" height="11" viewBox="0 0 11 11"><rect width="11" height="11" fill="#6db545"/><polyline points="2.20,9.50 3.64,7.20 4.65,8.70 5.67,6.10 6.43,6.90 8.72,2.80" fill="none" stroke="#f2f8ec" stroke-width="1.15" stroke-linejoin="round" stroke-linecap="round"/><circle cx="8.88" cy="2.5" r="1.0" fill="#f2f8ec"/></svg>
<div class="c" style="left:46px;top:299.70px;width:51px;">9</div>
<div class="c" style="left:98px;top:299.70px;width:42px;">2</div>
<div class="c" style="left:141px;top:299.70px;width:56px;">5</div>
<div class="c" style="left:198px;top:299.70px;width:32px;">25.42</div>
<div class="c" style="left:231px;top:299.70px;width:43px;"><span class="k">1,399.20</span></div>
<div class="c g" style="left:275px;top:299.70px;width:42px;">129.20</div>
<div class="c" style="left:318px;top:299.70px;width:43px;">50</div>
<div class="c" style="left:362px;top:299.70px;width:43px;">1,377.50</div>
<div class="c" style="left:406px;top:299.70px;width:41px;">1,413.80</div>
<div class="c" style="left:448px;top:299.70px;width:43px;">1,500</div>
<div class="c" style="left:492px;top:299.70px;width:62px;"><span class="k">18,150.00</span></div>
<div class="c" style="left:555px;top:299.70px;width:44px;">350</div>
<div class="c" style="left:600px;top:299.70px;width:41px;">1.55</div>
<div class="c" style="left:642px;top:299.70px;width:43px;">2.00</div>
<div class="c" style="left:686px;top:299.70px;width:43px;">1,650</div>
<div class="c r" style="left:730px;top:299.70px;width:42px;">-1.05</div>
<div class="c" style="left:773px;top:299.70px;width:43px;"><span class="k">1.55</span></div>
<div class="c" style="left:817px;top:299.70px;width:32px;">24.07</div>
<div class="c" style="left:850px;top:299.70px;width:56px;">52,985</div>
<div class="c" style="left:907px;top:299.70px;width:41px;">-911</div>
<div class="c" style="left:949px;top:299.70px;width:51px;">4,056</div>
<div class="a" style="left:23px;top:316px;width:22px;height:18px;background:#fff;"></div>
<div class="a" style="left:46px;top:316px;width:51px;height:18px;background:#f0eed8;"></div>
<div class="a" style="left:98px;top:316px;width:42px;height:18px;background:#f0eed8;"></div>
<div class="a" style="left:141px;top:316px;width:56px;height:18px;background:#f0eed8;"></div>
<div class="a" style="left:198px;top:316px;width:32px;height:18px;background:#f0eed8;"></div>
<div class="a" style="left:231px;top:316px;width:43px;height:18px;background:#f0eed8;"></div>
<div class="a" style="left:275px;top:316px;width:42px;height:18px;background:#f0eed8;"></div>
<div class="a" style="left:318px;top:316px;width:43px;height:18px;background:#f0eed8;"></div>
<div class="a" style="left:362px;top:316px;width:43px;height:18px;background:#f0eed8;"></div>
<div class="a" style="left:406px;top:316px;width:41px;height:18px;background:#f0eed8;"></div>
<div class="a" style="left:448px;top:316px;width:43px;height:18px;background:#f0eed8;"></div>
<div class="a" style="left:492px;top:316px;width:62px;height:18px;background:#fff;"></div>
<div class="a" style="left:555px;top:316px;width:44px;height:18px;background:#fff;"></div>
<div class="a" style="left:600px;top:316px;width:41px;height:18px;background:#fff;"></div>
<div class="a" style="left:642px;top:316px;width:43px;height:18px;background:#fff;"></div>
<div class="a" style="left:686px;top:316px;width:43px;height:18px;background:#fff;"></div>
<div class="a" style="left:730px;top:316px;width:42px;height:18px;background:#fff;"></div>
<div class="a" style="left:773px;top:316px;width:43px;height:18px;background:#fff;"></div>
<div class="a" style="left:817px;top:316px;width:32px;height:18px;background:#fff;"></div>
<div class="a" style="left:850px;top:316px;width:56px;height:18px;background:#fff;"></div>
<div class="a" style="left:907px;top:316px;width:41px;height:18px;background:#fff;"></div>
<div class="a" style="left:949px;top:316px;width:51px;height:18px;background:#fff;"></div>
<div class="a" style="left:1001px;top:316px;width:23px;height:18px;background:#fff;"></div>
<svg class="a" style="left:27px;top:321.7px" width="13" height="11" viewBox="0 0 13 11"><rect width="13" height="11" fill="#6db545"/><polyline points="2.60,9.50 4.30,7.20 5.50,8.70 6.70,6.10 7.60,6.90 10.30,2.80" fill="none" stroke="#f2f8ec" stroke-width="1.15" stroke-linejoin="round" stroke-linecap="round"/><circle cx="10.50" cy="2.5" r="1.0" fill="#f2f8ec"/></svg>
<svg class="a" style="left:1007px;top:321.7px" width="11" height="11" viewBox="0 0 11 11"><rect width="11" height="11" fill="#6db545"/><polyline points="2.20,9.50 3.64,7.20 4.65,8.70 5.67,6.10 6.43,6.90 8.72,2.80" fill="none" stroke="#f2f8ec" stroke-width="1.15" stroke-linejoin="round" stroke-linecap="round"/><circle cx="8.88" cy="2.5" r="1.0" fill="#f2f8ec"/></svg>
<div class="c" style="left:46px;top:317.70px;width:51px;">14</div>
<div class="c" style="left:98px;top:317.70px;width:42px;">2</div>
<div class="c" style="left:141px;top:317.70px;width:56px;">4</div>
<div class="c" style="left:198px;top:317.70px;width:32px;">-</div>
<div class="c" style="left:231px;top:317.70px;width:43px;"><span class="k">1,321.15</span></div>
<div class="c g" style="left:275px;top:317.70px;width:42px;">115.15</div>
<div class="c" style="left:318px;top:317.70px;width:43px;">1,400</div>
<div class="c" style="left:362px;top:317.70px;width:43px;">1,324.45</div>
<div class="c" style="left:406px;top:317.70px;width:41px;">1,334.05</div>
<div class="c" style="left:448px;top:317.70px;width:43px;">150</div>
<div class="c" style="left:492px;top:317.70px;width:62px;"><span class="k">18,200.00</span></div>
<div class="c" style="left:555px;top:317.70px;width:44px;">1,700</div>
<div class="c" style="left:600px;top:317.70px;width:41px;">1.60</div>
<div class="c" style="left:642px;top:317.70px;width:43px;">1.70</div>
<div class="c" style="left:686px;top:317.70px;width:43px;">900</div>
<div class="c r" style="left:730px;top:317.70px;width:42px;">-1.05</div>
<div class="c" style="left:773px;top:317.70px;width:43px;"><span class="k">1.60</span></div>
<div class="c" style="left:817px;top:317.70px;width:32px;">23.37</div>
<div class="c" style="left:850px;top:317.70px;width:56px;">1,10,308</div>
<div class="c" style="left:907px;top:317.70px;width:41px;">3,752</div>
<div class="c" style="left:949px;top:317.70px;width:51px;">16,409</div>
<div class="a" style="left:23px;top:335px;width:22px;height:17px;background:#fff;"></div>
<div class="a" style="left:46px;top:335px;width:51px;height:17px;background:#f0eed8;"></div>
<div class="a" style="left:98px;top:335px;width:42px;height:17px;background:#f0eed8;"></div>
<div class="a" style="left:141px;top:335px;width:56px;height:17px;background:#f0eed8;"></div>
<div class="a" style="left:198px;top:335px;width:32px;height:17px;background:#f0eed8;"></div>
<div class="a" style="left:231px;top:335px;width:43px;height:17px;background:#f0eed8;"></div>
<div class="a" style="left:275px;top:335px;width:42px;height:17px;background:#f0eed8;"></div>
<div class="a" style="left:318px;top:335px;width:43px;height:17px;background:#f0eed8;"></div>
<div class="a" style="left:362px;top:335px;width:43px;height:17px;background:#f0eed8;"></div>
<div class="a" style="left:406px;top:335px;width:41px;height:17px;background:#f0eed8;"></div>
<div class="a" style="left:448px;top:335px;width:43px;height:17px;background:#f0eed8;"></div>
<div class="a" style="left:492px;top:335px;width:62px;height:17px;background:#fff;"></div>
<div class="a" style="left:555px;top:335px;width:44px;height:17px;background:#fff;"></div>
<div class="a" style="left:600px;top:335px;width:41px;height:17px;background:#fff;"></div>
<div class="a" style="left:642px;top:335px;width:43px;height:17px;background:#fff;"></div>
<div class="a" style="left:686px;top:335px;width:43px;height:17px;background:#fff;"></div>
<div class="a" style="left:730px;top:335px;width:42px;height:17px;background:#fff;"></div>
<div class="a" style="left:773px;top:335px;width:43px;height:17px;background:#fff;"></div>
<div class="a" style="left:817px;top:335px;width:32px;height:17px;background:#fff;"></div>
<div class="a" style="left:850px;top:335px;width:56px;height:17px;background:#fff;"></div>
<div class="a" style="left:907px;top:335px;width:41px;height:17px;background:#fff;"></div>
<div class="a" style="left:949px;top:335px;width:51px;height:17px;background:#fff;"></div>
<div class="a" style="left:1001px;top:335px;width:23px;height:17px;background:#fff;"></div>
<svg class="a" style="left:27px;top:339.7px" width="13" height="11" viewBox="0 0 13 11"><rect width="13" height="11" fill="#6db545"/><polyline points="2.60,9.50 4.30,7.20 5.50,8.70 6.70,6.10 7.60,6.90 10.30,2.80" fill="none" stroke="#f2f8ec" stroke-width="1.15" stroke-linejoin="round" stroke-linecap="round"/><circle cx="10.50" cy="2.5" r="1.0" fill="#f2f8ec"/></svg>
<svg class="a" style="left:1007px;top:339.7px" width="11" height="11" viewBox="0 0 11 11"><rect width="11" height="11" fill="#6db545"/><polyline points="2.20,9.50 3.64,7.20 4.65,8.70 5.67,6.10 6.43,6.90 8.72,2.80" fill="none" stroke="#f2f8ec" stroke-width="1.15" stroke-linejoin="round" stroke-linecap="round"/><circle cx="8.88" cy="2.5" r="1.0" fill="#f2f8ec"/></svg>
<div class="c" style="left:46px;top:336.70px;width:51px;">13</div>
<div class="c" style="left:98px;top:336.70px;width:42px;">2</div>
<div class="c" style="left:141px;top:336.70px;width:56px;">4</div>
<div class="c" style="left:198px;top:336.70px;width:32px;">-</div>
<div class="c" style="left:231px;top:336.70px;width:43px;"><span class="k">1,285.35</span></div>
<div class="c g" style="left:275px;top:336.70px;width:42px;">155.35</div>
<div class="c" style="left:318px;top:336.70px;width:43px;">1,000</div>
<div class="c" style="left:362px;top:336.70px;width:43px;">1,261.70</div>
<div class="c" style="left:406px;top:336.70px;width:41px;">1,305.80</div>
<div class="c" style="left:448px;top:336.70px;width:43px;">1,000</div>
<div class="c" style="left:492px;top:336.70px;width:62px;"><span class="k">18,250.00</span></div>
<div class="c" style="left:555px;top:336.70px;width:44px;">32,800</div>
<div class="c" style="left:600px;top:336.70px;width:41px;">1.75</div>
<div class="c" style="left:642px;top:336.70px;width:43px;">1.85</div>
<div class="c" style="left:686px;top:336.70px;width:43px;">50</div>
<div class="c r" style="left:730px;top:336.70px;width:42px;">-1.00</div>
<div class="c" style="left:773px;top:336.70px;width:43px;"><span class="k">1.75</span></div>
<div class="c" style="left:817px;top:336.70px;width:32px;">22.83</div>
<div class="c" style="left:850px;top:336.70px;width:56px;">37,899</div>
<div class="c" style="left:907px;top:336.70px;width:41px;">-1,930</div>
<div class="c" style="left:949px;top:336.70px;width:51px;">1,831</div>
<div class="a" style="left:23px;top:353px;width:22px;height:18px;background:#fff;"></div>
<div class="a" style="left:46px;top:353px;width:51px;height:18px;background:#f0eed8;"></div>
<div class="a" style="left:98px;top:353px;width:42px;height:18px;background:#f0eed8;"></div>
<div class="a" style="left:141px;top:353px;width:56px;height:18px;background:#f0eed8;"></div>
<div class="a" style="left:198px;top:353px;width:32px;height:18px;background:#f0eed8;"></div>
<div class="a" style="left:231px;top:353px;width:43px;height:18px;background:#f0eed8;"></div>
<div class="a" style="left:275px;top:353px;width:42px;height:18px;background:#f0eed8;"></div>
<div class="a" style="left:318px;top:353px;width:43px;height:18px;background:#f0eed8;"></div>
<div class="a" style="left:362px;top:353px;width:43px;height:18px;background:#f0eed8;"></div>
<div class="a" style="left:406px;top:353px;width:41px;height:18px;background:#f0eed8;"></div>
<div class="a" style="left:448px;top:353px;width:43px;height:18px;background:#f0eed8;"></div>
<div class="a" style="left:492px;top:353px;width:62px;height:18px;background:#fff;"></div>
<div class="a" style="left:555px;top:353px;width:44px;height:18px;background:#fff;"></div>
<div class="a" style="left:600px;top:353px;width:41px;height:18px;background:#fff;"></div>
<div class="a" style="left:642px;top:353px;width:43px;height:18px;background:#fff;"></div>
<div class="a" style="left:686px;top:353px;width:43px;height:18px;background:#fff;"></div>
<div class="a" style="left:730px;top:353px;width:42px;height:18px;background:#fff;"></div>
<div class="a" style="left:773px;top:353px;width:43px;height:18px;background:#fff;"></div>
<div class="a" style="left:817px;top:353px;width:32px;height:18px;background:#fff;"></div>
<div class="a" style="left:850px;top:353px;width:56px;height:18px;background:#fff;"></div>
<div class="a" style="left:907px;top:353px;width:41px;height:18px;background:#fff;"></div>
<div class="a" style="left:949px;top:353px;width:51px;height:18px;background:#fff;"></div>
<div class="a" style="left:1001px;top:353px;width:23px;height:18px;background:#fff;"></div>
<svg class="a" style="left:27px;top:358.7px" width="13" height="11" viewBox="0 0 13 11"><rect width="13" height="11" fill="#6db545"/><polyline points="2.60,9.50 4.30,7.20 5.50,8.70 6.70,6.10 7.60,6.90 10.30,2.80" fill="none" stroke="#f2f8ec" stroke-width="1.15" stroke-linejoin="round" stroke-linecap="round"/><circle cx="10.50" cy="2.5" r="1.0" fill="#f2f8ec"/></svg>
<svg class="a" style="left:1007px;top:358.7px" width="11" height="11" viewBox="0 0 11 11"><rect width="11" height="11" fill="#6db545"/><polyline points="2.20,9.50 3.64,7.20 4.65,8.70 5.67,6.10 6.43,6.90 8.72,2.80" fill="none" stroke="#f2f8ec" stroke-width="1.15" stroke-linejoin="round" stroke-linecap="round"/><circle cx="8.88" cy="2.5" r="1.0" fill="#f2f8ec"/></svg>
<div class="c" style="left:46px;top:354.70px;width:51px;">10</div>
<div class="c" style="left:98px;top:354.70px;width:42px;">-</div>
<div class="c" style="left:141px;top:354.70px;width:56px;">6</div>
<div class="c" style="left:198px;top:354.70px;width:32px;">24.62</div>
<div class="c" style="left:231px;top:354.70px;width:43px;"><span class="k">1,251.00</span></div>
<div class="c g" style="left:275px;top:354.70px;width:42px;">134.75</div>
<div class="c" style="left:318px;top:354.70px;width:43px;">1,500</div>
<div class="c" style="left:362px;top:354.70px;width:43px;">1,197.10</div>
<div class="c" style="left:406px;top:354.70px;width:41px;">1,234.45</div>
<div class="c" style="left:448px;top:354.70px;width:43px;">50</div>
<div class="c" style="left:492px;top:354.70px;width:62px;"><span class="k">18,300.00</span></div>
<div class="c" style="left:555px;top:354.70px;width:44px;">50</div>
<div class="c" style="left:600px;top:354.70px;width:41px;">1.75</div>
<div class="c" style="left:642px;top:354.70px;width:43px;">1.80</div>
<div class="c" style="left:686px;top:354.70px;width:43px;">2,950</div>
<div class="c r" style="left:730px;top:354.70px;width:42px;">-0.85</div>
<div class="c" style="left:773px;top:354.70px;width:43px;"><span class="k">1.80</span></div>
<div class="c" style="left:817px;top:354.70px;width:32px;">22.11</div>
<div class="c" style="left:850px;top:354.70px;width:56px;">1,20,551</div>
<div class="c" style="left:907px;top:354.70px;width:41px;">-217</div>
<div class="c" style="left:949px;top:354.70px;width:51px;">18,468</div>
<div class="a" style="left:23px;top:372px;width:22px;height:18px;background:#fff;"></div>
<div class="a" style="left:46px;top:372px;width:51px;height:18px;background:#f0eed8;"></div>
<div class="a" style="left:98px;top:372px;width:42px;height:18px;background:#f0eed8;"></div>
<div class="a" style="left:141px;top:372px;width:56px;height:18px;background:#f0eed8;"></div>
<div class="a" style="left:198px;top:372px;width:32px;height:18px;background:#f0eed8;"></div>
<div class="a" style="left:231px;top:372px;width:43px;height:18px;background:#f0eed8;"></div>
<div class="a" style="left:275px;top:372px;width:42px;height:18px;background:#f0eed8;"></div>
<div class="a" style="left:318px;top:372px;width:43px;height:18px;background:#f0eed8;"></div>
<div class="a" style="left:362px;top:372px;width:43px;height:18px;background:#f0eed8;"></div>
<div class="a" style="left:406px;top:372px;width:41px;height:18px;background:#f0eed8;"></div>
<div class="a" style="left:448px;top:372px;width:43px;height:18px;background:#f0eed8;"></div>
<div class="a" style="left:492px;top:372px;width:62px;height:18px;background:#fff;"></div>
<div class="a" style="left:555px;top:372px;width:44px;height:18px;background:#fff;"></div>
<div class="a" style="left:600px;top:372px;width:41px;height:18px;background:#fff;"></div>
<div class="a" style="left:642px;top:372px;width:43px;height:18px;background:#fff;"></div>
<div class="a" style="left:686px;top:372px;width:43px;height:18px;background:#fff;"></div>
<div class="a" style="left:730px;top:372px;width:42px;height:18px;background:#fff;"></div>
<div class="a" style="left:773px;top:372px;width:43px;height:18px;background:#fff;"></div>
<div class="a" style="left:817px;top:372px;width:32px;height:18px;background:#fff;"></div>
<div class="a" style="left:850px;top:372px;width:56px;height:18px;background:#fff;"></div>
<div class="a" style="left:907px;top:372px;width:41px;height:18px;background:#fff;"></div>
<div class="a" style="left:949px;top:372px;width:51px;height:18px;background:#fff;"></div>
<div class="a" style="left:1001px;top:372px;width:23px;height:18px;background:#fff;"></div>
<svg class="a" style="left:27px;top:377.7px" width="13" height="11" viewBox="0 0 13 11"><rect width="13" height="11" fill="#6db545"/><polyline points="2.60,9.50 4.30,7.20 5.50,8.70 6.70,6.10 7.60,6.90 10.30,2.80" fill="none" stroke="#f2f8ec" stroke-width="1.15" stroke-linejoin="round" stroke-linecap="round"/><circle cx="10.50" cy="2.5" r="1.0" fill="#f2f8ec"/></svg>
<svg class="a" style="left:1007px;top:377.7px" width="11" height="11" viewBox="0 0 11 11"><rect width="11" height="11" fill="#6db545"/><polyline points="2.20,9.50 3.64,7.20 4.65,8.70 5.67,6.10 6.43,6.90 8.72,2.80" fill="none" stroke="#f2f8ec" stroke-width="1.15" stroke-linejoin="round" stroke-linecap="round"/><circle cx="8.88" cy="2.5" r="1.0" fill="#f2f8ec"/></svg>
<div class="c" style="left:46px;top:373.70px;width:51px;">13</div>
<div class="c" style="left:98px;top:373.70px;width:42px;">12</div>
<div class="c" style="left:141px;top:373.70px;width:56px;">16</div>
<div class="c" style="left:198px;top:373.70px;width:32px;">-</div>
<div class="c" style="left:231px;top:373.70px;width:43px;"><span class="k">1,179.55</span></div>
<div class="c g" style="left:275px;top:373.70px;width:42px;">135.15</div>
<div class="c" style="left:318px;top:373.70px;width:43px;">1,800</div>
<div class="c" style="left:362px;top:373.70px;width:43px;">1,165.45</div>
<div class="c" style="left:406px;top:373.70px;width:41px;">1,184.25</div>
<div class="c" style="left:448px;top:373.70px;width:43px;">200</div>
<div class="c" style="left:492px;top:373.70px;width:62px;"><span class="k">18,350.00</span></div>
<div class="c" style="left:555px;top:373.70px;width:44px;">150</div>
<div class="c" style="left:600px;top:373.70px;width:41px;">1.80</div>
<div class="c" style="left:642px;top:373.70px;width:43px;">1.95</div>
<div class="c" style="left:686px;top:373.70px;width:43px;">1,500</div>
<div class="c r" style="left:730px;top:373.70px;width:42px;">-1.00</div>
<div class="c" style="left:773px;top:373.70px;width:43px;"><span class="k">1.80</span></div>
<div class="c" style="left:817px;top:373.70px;width:32px;">21.31</div>
<div class="c" style="left:850px;top:373.70px;width:56px;">39,333</div>
<div class="c" style="left:907px;top:373.70px;width:41px;">-1,712</div>
<div class="c" style="left:949px;top:373.70px;width:51px;">1,861</div>
<div class="a" style="left:23px;top:391px;width:22px;height:17px;background:#fff;"></div>
<div class="a" style="left:46px;top:391px;width:51px;height:17px;background:#f0eed8;"></div>
<div class="a" style="left:98px;top:391px;width:42px;height:17px;background:#f0eed8;"></div>
<div class="a" style="left:141px;top:391px;width:56px;height:17px;background:#f0eed8;"></div>
<div class="a" style="left:198px;top:391px;width:32px;height:17px;background:#f0eed8;"></div>
<div class="a" style="left:231px;top:391px;width:43px;height:17px;background:#f0eed8;"></div>
<div class="a" style="left:275px;top:391px;width:42px;height:17px;background:#f0eed8;"></div>
<div class="a" style="left:318px;top:391px;width:43px;height:17px;background:#f0eed8;"></div>
<div class="a" style="left:362px;top:391px;width:43px;height:17px;background:#f0eed8;"></div>
<div class="a" style="left:406px;top:391px;width:41px;height:17px;background:#f0eed8;"></div>
<div class="a" style="left:448px;top:391px;width:43px;height:17px;background:#f0eed8;"></div>
<div class="a" style="left:492px;top:391px;width:62px;height:17px;background:#fff;"></div>
<div class="a" style="left:555px;top:391px;width:44px;height:17px;background:#fff;"></div>
<div class="a" style="left:600px;top:391px;width:41px;height:17px;background:#fff;"></div>
<div class="a" style="left:642px;top:391px;width:43px;height:17px;background:#fff;"></div>
<div class="a" style="left:686px;top:391px;width:43px;height:17px;background:#fff;"></div>
<div class="a" style="left:730px;top:391px;width:42px;height:17px;background:#fff;"></div>
<div class="a" style="left:773px;top:391px;width:43px;height:17px;background:#fff;"></div>
<div class="a" style="left:817px;top:391px;width:32px;height:17px;background:#fff;"></div>
<div class="a" style="left:850px;top:391px;width:56px;height:17px;background:#fff;"></div>
<div class="a" style="left:907px;top:391px;width:41px;height:17px;background:#fff;"></div>
<div class="a" style="left:949px;top:391px;width:51px;height:17px;background:#fff;"></div>
<div class="a" style="left:1001px;top:391px;width:23px;height:17px;background:#fff;"></div>
<svg class="a" style="left:27px;top:395.7px" width="13" height="11" viewBox="0 0 13 11"><rect width="13" height="11" fill="#6db545"/><polyline points="2.60,9.50 4.30,7.20 5.50,8.70 6.70,6.10 7.60,6.90 10.30,2.80" fill="none" stroke="#f2f8ec" stroke-width="1.15" stroke-linejoin="round" stroke-linecap="round"/><circle cx="10.50" cy="2.5" r="1.0" fill="#f2f8ec"/></svg>
<svg class="a" style="left:1007px;top:395.7px" width="11" height="11" viewBox="0 0 11 11"><rect width="11" height="11" fill="#6db545"/><polyline points="2.20,9.50 3.64,7.20 4.65,8.70 5.67,6.10 6.43,6.90 8.72,2.80" fill="none" stroke="#f2f8ec" stroke-width="1.15" stroke-linejoin="round" stroke-linecap="round"/><circle cx="8.88" cy="2.5" r="1.0" fill="#f2f8ec"/></svg>
<div class="c" style="left:46px;top:392.70px;width:51px;">186</div>
<div class="c" style="left:98px;top:392.70px;width:42px;">-</div>
<div class="c" style="left:141px;top:392.70px;width:56px;">18</div>
<div class="c" style="left:198px;top:392.70px;width:32px;">-</div>
<div class="c" style="left:231px;top:392.70px;width:43px;"><span class="k">1,128.45</span></div>
<div class="c g" style="left:275px;top:392.70px;width:42px;">119.95</div>
<div class="c" style="left:318px;top:392.70px;width:43px;">750</div>
<div class="c" style="left:362px;top:392.70px;width:43px;">1,103.05</div>
<div class="c" style="left:406px;top:392.70px;width:41px;">1,144.20</div>
<div class="c" style="left:448px;top:392.70px;width:43px;">150</div>
<div class="c" style="left:492px;top:392.70px;width:62px;"><span class="k">18,400.00</span></div>
<div class="c" style="left:555px;top:392.70px;width:44px;">50</div>
<div class="c" style="left:600px;top:392.70px;width:41px;">1.80</div>
<div class="c" style="left:642px;top:392.70px;width:43px;">2.20</div>
<div class="c" style="left:686px;top:392.70px;width:43px;">200</div>
<div class="c r" style="left:730px;top:392.70px;width:42px;">-0.45</div>
<div class="c" style="left:773px;top:392.70px;width:43px;"><span class="k">2.20</span></div>
<div class="c" style="left:817px;top:392.70px;width:32px;">21.05</div>
<div class="c" style="left:850px;top:392.70px;width:56px;">1,26,532</div>
<div class="c" style="left:907px;top:392.70px;width:41px;">-1,912</div>
<div class="c" style="left:949px;top:392.70px;width:51px;">13,377</div>
<div class="a" style="left:23px;top:409px;width:22px;height:18px;background:#fff;"></div>
<div class="a" style="left:46px;top:409px;width:51px;height:18px;background:#f0eed8;"></div>
<div class="a" style="left:98px;top:409px;width:42px;height:18px;background:#f0eed8;"></div>
<div class="a" style="left:141px;top:409px;width:56px;height:18px;background:#f0eed8;"></div>
<div class="a" style="left:198px;top:409px;width:32px;height:18px;background:#f0eed8;"></div>
<div class="a" style="left:231px;top:409px;width:43px;height:18px;background:#f0eed8;"></div>
<div class="a" style="left:275px;top:409px;width:42px;height:18px;background:#f0eed8;"></div>
<div class="a" style="left:318px;top:409px;width:43px;height:18px;background:#f0eed8;"></div>
<div class="a" style="left:362px;top:409px;width:43px;height:18px;background:#f0eed8;"></div>
<div class="a" style="left:406px;top:409px;width:41px;height:18px;background:#f0eed8;"></div>
<div class="a" style="left:448px;top:409px;width:43px;height:18px;background:#f0eed8;"></div>
<div class="a" style="left:492px;top:409px;width:62px;height:18px;background:#fff;"></div>
<div class="a" style="left:555px;top:409px;width:44px;height:18px;background:#fff;"></div>
<div class="a" style="left:600px;top:409px;width:41px;height:18px;background:#fff;"></div>
<div class="a" style="left:642px;top:409px;width:43px;height:18px;background:#fff;"></div>
<div class="a" style="left:686px;top:409px;width:43px;height:18px;background:#fff;"></div>
<div class="a" style="left:730px;top:409px;width:42px;height:18px;background:#fff;"></div>
<div class="a" style="left:773px;top:409px;width:43px;height:18px;background:#fff;"></div>
<div class="a" style="left:817px;top:409px;width:32px;height:18px;background:#fff;"></div>
<div class="a" style="left:850px;top:409px;width:56px;height:18px;background:#fff;"></div>
<div class="a" style="left:907px;top:409px;width:41px;height:18px;background:#fff;"></div>
<div class="a" style="left:949px;top:409px;width:51px;height:18px;background:#fff;"></div>
<div class="a" style="left:1001px;top:409px;width:23px;height:18px;background:#fff;"></div>
<svg class="a" style="left:27px;top:414.7px" width="13" height="11" viewBox="0 0 13 11"><rect width="13" height="11" fill="#6db545"/><polyline points="2.60,9.50 4.30,7.20 5.50,8.70 6.70,6.10 7.60,6.90 10.30,2.80" fill="none" stroke="#f2f8ec" stroke-width="1.15" stroke-linejoin="round" stroke-linecap="round"/><circle cx="10.50" cy="2.5" r="1.0" fill="#f2f8ec"/></svg>
<svg class="a" style="left:1007px;top:414.7px" width="11" height="11" viewBox="0 0 11 11"><rect width="11" height="11" fill="#6db545"/><polyline points="2.20,9.50 3.64,7.20 4.65,8.70 5.67,6.10 6.43,6.90 8.72,2.80" fill="none" stroke="#f2f8ec" stroke-width="1.15" stroke-linejoin="round" stroke-linecap="round"/><circle cx="8.88" cy="2.5" r="1.0" fill="#f2f8ec"/></svg>
<div class="c" style="left:46px;top:410.70px;width:51px;">15</div>
<div class="c" style="left:98px;top:410.70px;width:42px;">1</div>
<div class="c" style="left:141px;top:410.70px;width:56px;">5</div>
<div class="c" style="left:198px;top:410.70px;width:32px;">-</div>
<div class="c" style="left:231px;top:410.70px;width:43px;"><span class="k">1,083.45</span></div>
<div class="c g" style="left:275px;top:410.70px;width:42px;">127.85</div>
<div class="c" style="left:318px;top:410.70px;width:43px;">50</div>
<div class="c" style="left:362px;top:410.70px;width:43px;">1,077.95</div>
<div class="c" style="left:406px;top:410.70px;width:41px;">1,112.95</div>
<div class="c" style="left:448px;top:410.70px;width:43px;">1,500</div>
<div class="c" style="left:492px;top:410.70px;width:62px;"><span class="k">18,450.00</span></div>
<div class="c" style="left:555px;top:410.70px;width:44px;">400</div>
<div class="c" style="left:600px;top:410.70px;width:41px;">1.75</div>
<div class="c" style="left:642px;top:410.70px;width:43px;">2.55</div>
<div class="c" style="left:686px;top:410.70px;width:43px;">1,400</div>
<div class="c g" style="left:730px;top:410.70px;width:42px;">0.30</div>
<div class="c" style="left:773px;top:410.70px;width:43px;"><span class="k">3.00</span></div>
<div class="c" style="left:817px;top:410.70px;width:32px;">21.12</div>
<div class="c" style="left:850px;top:410.70px;width:56px;">41,912</div>
<div class="c" style="left:907px;top:410.70px;width:41px;">58</div>
<div class="c" style="left:949px;top:410.70px;width:51px;">2,851</div>
<div class="a" style="left:23px;top:428px;width:22px;height:17px;background:#fff;"></div>
<div class="a" style="left:46px;top:428px;width:51px;height:17px;background:#f0eed8;"></div>
<div class="a" style="left:98px;top:428px;width:42px;height:17px;background:#f0eed8;"></div>
<div class="a" style="left:141px;top:428px;width:56px;height:17px;background:#f0eed8;"></div>
<div class="a" style="left:198px;top:428px;width:32px;height:17px;background:#f0eed8;"></div>
<div class="a" style="left:231px;top:428px;width:43px;height:17px;background:#f0eed8;"></div>
<div class="a" style="left:275px;top:428px;width:42px;height:17px;background:#f0eed8;"></div>
<div class="a" style="left:318px;top:428px;width:43px;height:17px;background:#f0eed8;"></div>
<div class="a" style="left:362px;top:428px;width:43px;height:17px;background:#f0eed8;"></div>
<div class="a" style="left:406px;top:428px;width:41px;height:17px;background:#f0eed8;"></div>
<div class="a" style="left:448px;top:428px;width:43px;height:17px;background:#f0eed8;"></div>
<div class="a" style="left:492px;top:428px;width:62px;height:17px;background:#fff;"></div>
<div class="a" style="left:555px;top:428px;width:44px;height:17px;background:#fff;"></div>
<div class="a" style="left:600px;top:428px;width:41px;height:17px;background:#fff;"></div>
<div class="a" style="left:642px;top:428px;width:43px;height:17px;background:#fff;"></div>
<div class="a" style="left:686px;top:428px;width:43px;height:17px;background:#fff;"></div>
<div class="a" style="left:730px;top:428px;width:42px;height:17px;background:#fff;"></div>
<div class="a" style="left:773px;top:428px;width:43px;height:17px;background:#fff;"></div>
<div class="a" style="left:817px;top:428px;width:32px;height:17px;background:#fff;"></div>
<div class="a" style="left:850px;top:428px;width:56px;height:17px;background:#fff;"></div>
<div class="a" style="left:907px;top:428px;width:41px;height:17px;background:#fff;"></div>
<div class="a" style="left:949px;top:428px;width:51px;height:17px;background:#fff;"></div>
<div class="a" style="left:1001px;top:428px;width:23px;height:17px;background:#fff;"></div>
<svg class="a" style="left:27px;top:432.7px" width="13" height="11" viewBox="0 0 13 11"><rect width="13" height="11" fill="#6db545"/><polyline points="2.60,9.50 4.30,7.20 5.50,8.70 6.70,6.10 7.60,6.90 10.30,2.80" fill="none" stroke="#f2f8ec" stroke-width="1.15" stroke-linejoin="round" stroke-linecap="round"/><circle cx="10.50" cy="2.5" r="1.0" fill="#f2f8ec"/></svg>
<svg class="a" style="left:1007px;top:432.7px" width="11" height="11" viewBox="0 0 11 11"><rect width="11" height="11" fill="#6db545"/><polyline points="2.20,9.50 3.64,7.20 4.65,8.70 5.67,6.10 6.43,6.90 8.72,2.80" fill="none" stroke="#f2f8ec" stroke-width="1.15" stroke-linejoin="round" stroke-linecap="round"/><circle cx="8.88" cy="2.5" r="1.0" fill="#f2f8ec"/></svg>
<div class="c" style="left:46px;top:429.70px;width:51px;">511</div>
<div class="c" style="left:98px;top:429.70px;width:42px;">81</div>
<div class="c" style="left:141px;top:429.70px;width:56px;">230</div>
<div class="c" style="left:198px;top:429.70px;width:32px;">-</div>
<div class="c" style="left:231px;top:429.70px;width:43px;"><span class="k">1,031.00</span></div>
<div class="c g" style="left:275px;top:429.70px;width:42px;">117.20</div>
<div class="c" style="left:318px;top:429.70px;width:43px;">50</div>
<div class="c" style="left:362px;top:429.70px;width:43px;">1,029.00</div>
<div class="c" style="left:406px;top:429.70px;width:41px;">1,034.15</div>
<div class="c" style="left:448px;top:429.70px;width:43px;">750</div>
<div class="c" style="left:492px;top:429.70px;width:62px;"><span class="k">18,500.00</span></div>
<div class="c" style="left:555px;top:429.70px;width:44px;">2,750</div>
<div class="c" style="left:600px;top:429.70px;width:41px;">2.05</div>
<div class="c" style="left:642px;top:429.70px;width:43px;">2.10</div>
<div class="c" style="left:686px;top:429.70px;width:43px;">9,900</div>
<div class="c r" style="left:730px;top:429.70px;width:42px;">-0.75</div>
<div class="c" style="left:773px;top:429.70px;width:43px;"><span class="k">2.10</span></div>
<div class="c" style="left:817px;top:429.70px;width:32px;">19.28</div>
<div class="c" style="left:850px;top:429.70px;width:56px;">3,85,194</div>
<div class="c" style="left:907px;top:429.70px;width:41px;">30,239</div>
<div class="c" style="left:949px;top:429.70px;width:51px;">90,784</div>
<div class="a" style="left:23px;top:446px;width:22px;height:18px;background:#fff;"></div>
<div class="a" style="left:46px;top:446px;width:51px;height:18px;background:#f0eed8;"></div>
<div class="a" style="left:98px;top:446px;width:42px;height:18px;background:#f0eed8;"></div>
<div class="a" style="left:141px;top:446px;width:56px;height:18px;background:#f0eed8;"></div>
<div class="a" style="left:198px;top:446px;width:32px;height:18px;background:#f0eed8;"></div>
<div class="a" style="left:231px;top:446px;width:43px;height:18px;background:#f0eed8;"></div>
<div class="a" style="left:275px;top:446px;width:42px;height:18px;background:#f0eed8;"></div>
<div class="a" style="left:318px;top:446px;width:43px;height:18px;background:#f0eed8;"></div>
<div class="a" style="left:362px;top:446px;width:43px;height:18px;background:#f0eed8;"></div>
<div class="a" style="left:406px;top:446px;width:41px;height:18px;background:#f0eed8;"></div>
<div class="a" style="left:448px;top:446px;width:43px;height:18px;background:#f0eed8;"></div>
<div class="a" style="left:492px;top:446px;width:62px;height:18px;background:#fff;"></div>
<div class="a" style="left:555px;top:446px;width:44px;height:18px;background:#fff;"></div>
<div class="a" style="left:600px;top:446px;width:41px;height:18px;background:#fff;"></div>
<div class="a" style="left:642px;top:446px;width:43px;height:18px;background:#fff;"></div>
<div class="a" style="left:686px;top:446px;width:43px;height:18px;background:#fff;"></div>
<div class="a" style="left:730px;top:446px;width:42px;height:18px;background:#fff;"></div>
<div class="a" style="left:773px;top:446px;width:43px;height:18px;background:#fff;"></div>
<div class="a" style="left:817px;top:446px;width:32px;height:18px;background:#fff;"></div>
<div class="a" style="left:850px;top:446px;width:56px;height:18px;background:#fff;"></div>
<div class="a" style="left:907px;top:446px;width:41px;height:18px;background:#fff;"></div>
<div class="a" style="left:949px;top:446px;width:51px;height:18px;background:#fff;"></div>
<div class="a" style="left:1001px;top:446px;width:23px;height:18px;background:#fff;"></div>
<svg class="a" style="left:27px;top:451.7px" width="13" height="11" viewBox="0 0 13 11"><rect width="13" height="11" fill="#6db545"/><polyline points="2.60,9.50 4.30,7.20 5.50,8.70 6.70,6.10 7.60,6.90 10.30,2.80" fill="none" stroke="#f2f8ec" stroke-width="1.15" stroke-linejoin="round" stroke-linecap="round"/><circle cx="10.50" cy="2.5" r="1.0" fill="#f2f8ec"/></svg>
<svg class="a" style="left:1007px;top:451.7px" width="11" height="11" viewBox="0 0 11 11"><rect width="11" height="11" fill="#6db545"/><polyline points="2.20,9.50 3.64,7.20 4.65,8.70 5.67,6.10 6.43,6.90 8.72,2.80" fill="none" stroke="#f2f8ec" stroke-width="1.15" stroke-linejoin="round" stroke-linecap="round"/><circle cx="8.88" cy="2.5" r="1.0" fill="#f2f8ec"/></svg>
<div class="c" style="left:46px;top:447.70px;width:51px;">30</div>
<div class="c" style="left:98px;top:447.70px;width:42px;">-</div>
<div class="c" style="left:141px;top:447.70px;width:56px;">19</div>
<div class="c" style="left:198px;top:447.70px;width:32px;">-</div>
<div class="c" style="left:231px;top:447.70px;width:43px;"><span class="k">983.50</span></div>
<div class="c g" style="left:275px;top:447.70px;width:42px;">119.90</div>
<div class="c" style="left:318px;top:447.70px;width:43px;">150</div>
<div class="c" style="left:362px;top:447.70px;width:43px;">973.80</div>
<div class="c" style="left:406px;top:447.70px;width:41px;">984.35</div>
<div class="c" style="left:448px;top:447.70px;width:43px;">150</div>
<div class="c" style="left:492px;top:447.70px;width:62px;"><span class="k">18,550.00</span></div>
<div class="c" style="left:555px;top:447.70px;width:44px;">2,350</div>
<div class="c" style="left:600px;top:447.70px;width:41px;">1.90</div>
<div class="c" style="left:642px;top:447.70px;width:43px;">2.10</div>
<div class="c" style="left:686px;top:447.70px;width:43px;">50</div>
<div class="c r" style="left:730px;top:447.70px;width:42px;">-1.05</div>
<div class="c" style="left:773px;top:447.70px;width:43px;"><span class="k">2.00</span></div>
<div class="c" style="left:817px;top:447.70px;width:32px;">18.34</div>
<div class="c" style="left:850px;top:447.70px;width:56px;">70,045</div>
<div class="c" style="left:907px;top:447.70px;width:41px;">3,360</div>
<div class="c" style="left:949px;top:447.70px;width:51px;">5,192</div>
<div class="a" style="left:23px;top:465px;width:22px;height:18px;background:#fff;"></div>
<div class="a" style="left:46px;top:465px;width:51px;height:18px;background:#f0eed8;"></div>
<div class="a" style="left:98px;top:465px;width:42px;height:18px;background:#f0eed8;"></div>
<div class="a" style="left:141px;top:465px;width:56px;height:18px;background:#f0eed8;"></div>
<div class="a" style="left:198px;top:465px;width:32px;height:18px;background:#f0eed8;"></div>
<div class="a" style="left:231px;top:465px;width:43px;height:18px;background:#f0eed8;"></div>
<div class="a" style="left:275px;top:465px;width:42px;height:18px;background:#f0eed8;"></div>
<div class="a" style="left:318px;top:465px;width:43px;height:18px;background:#f0eed8;"></div>
<div class="a" style="left:362px;top:465px;width:43px;height:18px;background:#f0eed8;"></div>
<div class="a" style="left:406px;top:465px;width:41px;height:18px;background:#f0eed8;"></div>
<div class="a" style="left:448px;top:465px;width:43px;height:18px;background:#f0eed8;"></div>
<div class="a" style="left:492px;top:465px;width:62px;height:18px;background:#fff;"></div>
<div class="a" style="left:555px;top:465px;width:44px;height:18px;background:#fff;"></div>
<div class="a" style="left:600px;top:465px;width:41px;height:18px;background:#fff;"></div>
<div class="a" style="left:642px;top:465px;width:43px;height:18px;background:#fff;"></div>
<div class="a" style="left:686px;top:465px;width:43px;height:18px;background:#fff;"></div>
<div class="a" style="left:730px;top:465px;width:42px;height:18px;background:#fff;"></div>
<div class="a" style="left:773px;top:465px;width:43px;height:18px;background:#fff;"></div>
<div class="a" style="left:817px;top:465px;width:32px;height:18px;background:#fff;"></div>
<div class="a" style="left:850px;top:465px;width:56px;height:18px;background:#fff;"></div>
<div class="a" style="left:907px;top:465px;width:41px;height:18px;background:#fff;"></div>
<div class="a" style="left:949px;top:465px;width:51px;height:18px;background:#fff;"></div>
<div class="a" style="left:1001px;top:465px;width:23px;height:18px;background:#fff;"></div>
<svg class="a" style="left:27px;top:470.7px" width="13" height="11" viewBox="0 0 13 11"><rect width="13" height="11" fill="#6db545"/><polyline points="2.60,9.50 4.30,7.20 5.50,8.70 6.70,6.10 7.60,6.90 10.30,2.80" fill="none" stroke="#f2f8ec" stroke-width="1.15" stroke-linejoin="round" stroke-linecap="round"/><circle cx="10.50" cy="2.5" r="1.0" fill="#f2f8ec"/></svg>
<svg class="a" style="left:1007px;top:470.7px" width="11" height="11" viewBox="0 0 11 11"><rect width="11" height="11" fill="#6db545"/><polyline points="2.20,9.50 3.64,7.20 4.65,8.70 5.67,6.10 6.43,6.90 8.72,2.80" fill="none" stroke="#f2f8ec" stroke-width="1.15" stroke-linejoin="round" stroke-linecap="round"/><circle cx="8.88" cy="2.5" r="1.0" fill="#f2f8ec"/></svg>
<div class="c" style="left:46px;top:466.70px;width:51px;">407</div>
<div class="c" style="left:98px;top:466.70px;width:42px;">1</div>
<div class="c" style="left:141px;top:466.70px;width:56px;">36</div>
<div class="c" style="left:198px;top:466.70px;width:32px;">-</div>
<div class="c" style="left:231px;top:466.70px;width:43px;"><span class="k">936.00</span></div>
<div class="c g" style="left:275px;top:466.70px;width:42px;">114.15</div>
<div class="c" style="left:318px;top:466.70px;width:43px;">600</div>
<div class="c" style="left:362px;top:466.70px;width:43px;">926.45</div>
<div class="c" style="left:406px;top:466.70px;width:41px;">957.40</div>
<div class="c" style="left:448px;top:466.70px;width:43px;">550</div>
<div class="c" style="left:492px;top:466.70px;width:62px;"><span class="k">18,600.00</span></div>
<div class="c" style="left:555px;top:466.70px;width:44px;">3,400</div>
<div class="c" style="left:600px;top:466.70px;width:41px;">2.00</div>
<div class="c" style="left:642px;top:466.70px;width:43px;">2.25</div>
<div class="c" style="left:686px;top:466.70px;width:43px;">100</div>
<div class="c r" style="left:730px;top:466.70px;width:42px;">-1.45</div>
<div class="c" style="left:773px;top:466.70px;width:43px;"><span class="k">2.00</span></div>
<div class="c" style="left:817px;top:466.70px;width:32px;">17.52</div>
<div class="c" style="left:850px;top:466.70px;width:56px;">2,47,962</div>
<div class="c" style="left:907px;top:466.70px;width:41px;">-991</div>
<div class="c" style="left:949px;top:466.70px;width:51px;">19,532</div>
<div class="a" style="left:23px;top:484px;width:22px;height:17px;background:#fff;"></div>
<div class="a" style="left:46px;top:484px;width:51px;height:17px;background:#f0eed8;"></div>
<div class="a" style="left:98px;top:484px;width:42px;height:17px;background:#f0eed8;"></div>
<div class="a" style="left:141px;top:484px;width:56px;height:17px;background:#f0eed8;"></div>
<div class="a" style="left:198px;top:484px;width:32px;height:17px;background:#f0eed8;"></div>
<div class="a" style="left:231px;top:484px;width:43px;height:17px;background:#f0eed8;"></div>
<div class="a" style="left:275px;top:484px;width:42px;height:17px;background:#f0eed8;"></div>
<div class="a" style="left:318px;top:484px;width:43px;height:17px;background:#f0eed8;"></div>
<div class="a" style="left:362px;top:484px;width:43px;height:17px;background:#f0eed8;"></div>
<div class="a" style="left:406px;top:484px;width:41px;height:17px;background:#f0eed8;"></div>
<div class="a" style="left:448px;top:484px;width:43px;height:17px;background:#f0eed8;"></div>
<div class="a" style="left:492px;top:484px;width:62px;height:17px;background:#fff;"></div>
<div class="a" style="left:555px;top:484px;width:44px;height:17px;background:#fff;"></div>
<div class="a" style="left:600px;top:484px;width:41px;height:17px;background:#fff;"></div>
<div class="a" style="left:642px;top:484px;width:43px;height:17px;background:#fff;"></div>
<div class="a" style="left:686px;top:484px;width:43px;height:17px;background:#fff;"></div>
<div class="a" style="left:730px;top:484px;width:42px;height:17px;background:#fff;"></div>
<div class="a" style="left:773px;top:484px;width:43px;height:17px;background:#fff;"></div>
<div class="a" style="left:817px;top:484px;width:32px;height:17px;background:#fff;"></div>
<div class="a" style="left:850px;top:484px;width:56px;height:17px;background:#fff;"></div>
<div class="a" style="left:907px;top:484px;width:41px;height:17px;background:#fff;"></div>
<div class="a" style="left:949px;top:484px;width:51px;height:17px;background:#fff;"></div>
<div class="a" style="left:1001px;top:484px;width:23px;height:17px;background:#fff;"></div>
<svg class="a" style="left:27px;top:488.7px" width="13" height="11" viewBox="0 0 13 11"><rect width="13" height="11" fill="#6db545"/><polyline points="2.60,9.50 4.30,7.20 5.50,8.70 6.70,6.10 7.60,6.90 10.30,2.80" fill="none" stroke="#f2f8ec" stroke-width="1.15" stroke-linejoin="round" stroke-linecap="round"/><circle cx="10.50" cy="2.5" r="1.0" fill="#f2f8ec"/></svg>
<svg class="a" style="left:1007px;top:488.7px" width="11" height="11" viewBox="0 0 11 11"><rect width="11" height="11" fill="#6db545"/><polyline points="2.20,9.50 3.64,7.20 4.65,8.70 5.67,6.10 6.43,6.90 8.72,2.80" fill="none" stroke="#f2f8ec" stroke-width="1.15" stroke-linejoin="round" stroke-linecap="round"/><circle cx="8.88" cy="2.5" r="1.0" fill="#f2f8ec"/></svg>
<div class="c" style="left:46px;top:485.70px;width:51px;">43</div>
<div class="c" style="left:98px;top:485.70px;width:42px;">-</div>
<div class="c" style="left:141px;top:485.70px;width:56px;">12</div>
<div class="c" style="left:198px;top:485.70px;width:32px;">-</div>
<div class="c" style="left:231px;top:485.70px;width:43px;"><span class="k">870.70</span></div>
<div class="c g" style="left:275px;top:485.70px;width:42px;">103.60</div>
<div class="c" style="left:318px;top:485.70px;width:43px;">100</div>
<div class="c" style="left:362px;top:485.70px;width:43px;">876.00</div>
<div class="c" style="left:406px;top:485.70px;width:41px;">887.50</div>
<div class="c" style="left:448px;top:485.70px;width:43px;">150</div>
<div class="c" style="left:492px;top:485.70px;width:62px;"><span class="k">18,650.00</span></div>
<div class="c" style="left:555px;top:485.70px;width:44px;">2,350</div>
<div class="c" style="left:600px;top:485.70px;width:41px;">2.05</div>
<div class="c" style="left:642px;top:485.70px;width:43px;">2.30</div>
<div class="c" style="left:686px;top:485.70px;width:43px;">200</div>
<div class="c r" style="left:730px;top:485.70px;width:42px;">-1.35</div>
<div class="c" style="left:773px;top:485.70px;width:43px;"><span class="k">2.25</span></div>
<div class="c" style="left:817px;top:485.70px;width:32px;">16.98</div>
<div class="c" style="left:850px;top:485.70px;width:56px;">1,17,659</div>
<div class="c" style="left:907px;top:485.70px;width:41px;">925</div>
<div class="c" style="left:949px;top:485.70px;width:51px;">7,839</div>
<div class="a" style="left:23px;top:502px;width:22px;height:18px;background:#fff;"></div>
<div class="a" style="left:46px;top:502px;width:51px;height:18px;background:#f0eed8;"></div>
<div class="a" style="left:98px;top:502px;width:42px;height:18px;background:#f0eed8;"></div>
<div class="a" style="left:141px;top:502px;width:56px;height:18px;background:#f0eed8;"></div>
<div class="a" style="left:198px;top:502px;width:32px;height:18px;background:#f0eed8;"></div>
<div class="a" style="left:231px;top:502px;width:43px;height:18px;background:#f0eed8;"></div>
<div class="a" style="left:275px;top:502px;width:42px;height:18px;background:#f0eed8;"></div>
<div class="a" style="left:318px;top:502px;width:43px;height:18px;background:#f0eed8;"></div>
<div class="a" style="left:362px;top:502px;width:43px;height:18px;background:#f0eed8;"></div>
<div class="a" style="left:406px;top:502px;width:41px;height:18px;background:#f0eed8;"></div>
<div class="a" style="left:448px;top:502px;width:43px;height:18px;background:#f0eed8;"></div>
<div class="a" style="left:492px;top:502px;width:62px;height:18px;background:#fff;"></div>
<div class="a" style="left:555px;top:502px;width:44px;height:18px;background:#fff;"></div>
<div class="a" style="left:600px;top:502px;width:41px;height:18px;background:#fff;"></div>
<div class="a" style="left:642px;top:502px;width:43px;height:18px;background:#fff;"></div>
<div class="a" style="left:686px;top:502px;width:43px;height:18px;background:#fff;"></div>
<div class="a" style="left:730px;top:502px;width:42px;height:18px;background:#fff;"></div>
<div class="a" style="left:773px;top:502px;width:43px;height:18px;background:#fff;"></div>
<div class="a" style="left:817px;top:502px;width:32px;height:18px;background:#fff;"></div>
<div class="a" style="left:850px;top:502px;width:56px;height:18px;background:#fff;"></div>
<div class="a" style="left:907px;top:502px;width:41px;height:18px;background:#fff;"></div>
<div class="a" style="left:949px;top:502px;width:51px;height:18px;background:#fff;"></div>
<div class="a" style="left:1001px;top:502px;width:23px;height:18px;background:#fff;"></div>
<svg class="a" style="left:27px;top:507.7px" width="13" height="11" viewBox="0 0 13 11"><rect width="13" height="11" fill="#6db545"/><polyline points="2.60,9.50 4.30,7.20 5.50,8.70 6.70,6.10 7.60,6.90 10.30,2.80" fill="none" stroke="#f2f8ec" stroke-width="1.15" stroke-linejoin="round" stroke-linecap="round"/><circle cx="10.50" cy="2.5" r="1.0" fill="#f2f8ec"/></svg>
<svg class="a" style="left:1007px;top:507.7px" width="11" height="11" viewBox="0 0 11 11"><rect width="11" height="11" fill="#6db545"/><polyline points="2.20,9.50 3.64,7.20 4.65,8.70 5.67,6.10 6.43,6.90 8.72,2.80" fill="none" stroke="#f2f8ec" stroke-width="1.15" stroke-linejoin="round" stroke-linecap="round"/><circle cx="8.88" cy="2.5" r="1.0" fill="#f2f8ec"/></svg>
<div class="c" style="left:46px;top:503.70px;width:51px;">639</div>
<div class="c" style="left:98px;top:503.70px;width:42px;">54</div>
<div class="c" style="left:141px;top:503.70px;width:56px;">92</div>
<div class="c" style="left:198px;top:503.70px;width:32px;">-</div>
<div class="c" style="left:231px;top:503.70px;width:43px;"><span class="k">829.55</span></div>
<div class="c g" style="left:275px;top:503.70px;width:42px;">111.85</div>
<div class="c" style="left:318px;top:503.70px;width:43px;">400</div>
<div class="c" style="left:362px;top:503.70px;width:43px;">827.95</div>
<div class="c" style="left:406px;top:503.70px;width:41px;">831.85</div>
<div class="c" style="left:448px;top:503.70px;width:43px;">50</div>
<div class="c" style="left:492px;top:503.70px;width:62px;"><span class="k">18,700.00</span></div>
<div class="c" style="left:555px;top:503.70px;width:44px;">2,350</div>
<div class="c" style="left:600px;top:503.70px;width:41px;">2.30</div>
<div class="c" style="left:642px;top:503.70px;width:43px;">2.80</div>
<div class="c" style="left:686px;top:503.70px;width:43px;">1,300</div>
<div class="c r" style="left:730px;top:503.70px;width:42px;">-1.90</div>
<div class="c" style="left:773px;top:503.70px;width:43px;"><span class="k">2.30</span></div>
<div class="c" style="left:817px;top:503.70px;width:32px;">16.19</div>
<div class="c" style="left:850px;top:503.70px;width:56px;">3,92,773</div>
<div class="c" style="left:907px;top:503.70px;width:41px;">15,204</div>
<div class="c" style="left:949px;top:503.70px;width:51px;">48,620</div>
<div class="a" style="left:23px;top:521px;width:22px;height:17px;background:#fff;"></div>
<div class="a" style="left:46px;top:521px;width:51px;height:17px;background:#f0eed8;"></div>
<div class="a" style="left:98px;top:521px;width:42px;height:17px;background:#f0eed8;"></div>
<div class="a" style="left:141px;top:521px;width:56px;height:17px;background:#f0eed8;"></div>
<div class="a" style="left:198px;top:521px;width:32px;height:17px;background:#f0eed8;"></div>
<div class="a" style="left:231px;top:521px;width:43px;height:17px;background:#f0eed8;"></div>
<div class="a" style="left:275px;top:521px;width:42px;height:17px;background:#f0eed8;"></div>
<div class="a" style="left:318px;top:521px;width:43px;height:17px;background:#f0eed8;"></div>
<div class="a" style="left:362px;top:521px;width:43px;height:17px;background:#f0eed8;"></div>
<div class="a" style="left:406px;top:521px;width:41px;height:17px;background:#f0eed8;"></div>
<div class="a" style="left:448px;top:521px;width:43px;height:17px;background:#f0eed8;"></div>
<div class="a" style="left:492px;top:521px;width:62px;height:17px;background:#fff;"></div>
<div class="a" style="left:555px;top:521px;width:44px;height:17px;background:#fff;"></div>
<div class="a" style="left:600px;top:521px;width:41px;height:17px;background:#fff;"></div>
<div class="a" style="left:642px;top:521px;width:43px;height:17px;background:#fff;"></div>
<div class="a" style="left:686px;top:521px;width:43px;height:17px;background:#fff;"></div>
<div class="a" style="left:730px;top:521px;width:42px;height:17px;background:#fff;"></div>
<div class="a" style="left:773px;top:521px;width:43px;height:17px;background:#fff;"></div>
<div class="a" style="left:817px;top:521px;width:32px;height:17px;background:#fff;"></div>
<div class="a" style="left:850px;top:521px;width:56px;height:17px;background:#fff;"></div>
<div class="a" style="left:907px;top:521px;width:41px;height:17px;background:#fff;"></div>
<div class="a" style="left:949px;top:521px;width:51px;height:17px;background:#fff;"></div>
<div class="a" style="left:1001px;top:521px;width:23px;height:17px;background:#fff;"></div>
<svg class="a" style="left:27px;top:525.7px" width="13" height="11" viewBox="0 0 13 11"><rect width="13" height="11" fill="#6db545"/><polyline points="2.60,9.50 4.30,7.20 5.50,8.70 6.70,6.10 7.60,6.90 10.30,2.80" fill="none" stroke="#f2f8ec" stroke-width="1.15" stroke-linejoin="round" stroke-linecap="round"/><circle cx="10.50" cy="2.5" r="1.0" fill="#f2f8ec"/></svg>
<svg class="a" style="left:1007px;top:525.7px" width="11" height="11" viewBox="0 0 11 11"><rect width="11" height="11" fill="#6db545"/><polyline points="2.20,9.50 3.64,7.20 4.65,8.70 5.67,6.10 6.43,6.90 8.72,2.80" fill="none" stroke="#f2f8ec" stroke-width="1.15" stroke-linejoin="round" stroke-linecap="round"/><circle cx="8.88" cy="2.5" r="1.0" fill="#f2f8ec"/></svg>
<div class="c" style="left:46px;top:522.70px;width:51px;">47</div>
<div class="c" style="left:98px;top:522.70px;width:42px;">1</div>
<div class="c" style="left:141px;top:522.70px;width:56px;">23</div>
<div class="c" style="left:198px;top:522.70px;width:32px;">-</div>
<div class="c" style="left:231px;top:522.70px;width:43px;"><span class="k">782.30</span></div>
<div class="c g" style="left:275px;top:522.70px;width:42px;">94.45</div>
<div class="c" style="left:318px;top:522.70px;width:43px;">50</div>
<div class="c" style="left:362px;top:522.70px;width:43px;">780.55</div>
<div class="c" style="left:406px;top:522.70px;width:41px;">816.60</div>
<div class="c" style="left:448px;top:522.70px;width:43px;">1,500</div>
<div class="c" style="left:492px;top:522.70px;width:62px;"><span class="k">18,750.00</span></div>
<div class="c" style="left:555px;top:522.70px;width:44px;">1,150</div>
<div class="c" style="left:600px;top:522.70px;width:41px;">2.60</div>
<div class="c" style="left:642px;top:522.70px;width:43px;">3.05</div>
<div class="c" style="left:686px;top:522.70px;width:43px;">1,100</div>
<div class="c r" style="left:730px;top:522.70px;width:42px;">-1.95</div>
<div class="c" style="left:773px;top:522.70px;width:43px;"><span class="k">2.70</span></div>
<div class="c" style="left:817px;top:522.70px;width:32px;">15.72</div>
<div class="c" style="left:850px;top:522.70px;width:56px;">1,21,347</div>
<div class="c" style="left:907px;top:522.70px;width:41px;">3,343</div>
<div class="c" style="left:949px;top:522.70px;width:51px;">8,539</div>
<div class="a" style="left:23px;top:539px;width:22px;height:18px;background:#fff;"></div>
<div class="a" style="left:46px;top:539px;width:51px;height:18px;background:#f0eed8;"></div>
<div class="a" style="left:98px;top:539px;width:42px;height:18px;background:#f0eed8;"></div>
<div class="a" style="left:141px;top:539px;width:56px;height:18px;background:#f0eed8;"></div>
<div class="a" style="left:198px;top:539px;width:32px;height:18px;background:#f0eed8;"></div>
<div class="a" style="left:231px;top:539px;width:43px;height:18px;background:#f0eed8;"></div>
<div class="a" style="left:275px;top:539px;width:42px;height:18px;background:#f0eed8;"></div>
<div class="a" style="left:318px;top:539px;width:43px;height:18px;background:#f0eed8;"></div>
<div class="a" style="left:362px;top:539px;width:43px;height:18px;background:#f0eed8;"></div>
<div class="a" style="left:406px;top:539px;width:41px;height:18px;background:#f0eed8;"></div>
<div class="a" style="left:448px;top:539px;width:43px;height:18px;background:#f0eed8;"></div>
<div class="a" style="left:492px;top:539px;width:62px;height:18px;background:#fff;"></div>
<div class="a" style="left:555px;top:539px;width:44px;height:18px;background:#fff;"></div>
<div class="a" style="left:600px;top:539px;width:41px;height:18px;background:#fff;"></div>
<div class="a" style="left:642px;top:539px;width:43px;height:18px;background:#fff;"></div>
<div class="a" style="left:686px;top:539px;width:43px;height:18px;background:#fff;"></div>
<div class="a" style="left:730px;top:539px;width:42px;height:18px;background:#fff;"></div>
<div class="a" style="left:773px;top:539px;width:43px;height:18px;background:#fff;"></div>
<div class="a" style="left:817px;top:539px;width:32px;height:18px;background:#fff;"></div>
<div class="a" style="left:850px;top:539px;width:56px;height:18px;background:#fff;"></div>
<div class="a" style="left:907px;top:539px;width:41px;height:18px;background:#fff;"></div>
<div class="a" style="left:949px;top:539px;width:51px;height:18px;background:#fff;"></div>
<div class="a" style="left:1001px;top:539px;width:23px;height:18px;background:#fff;"></div>
<svg class="a" style="left:27px;top:544.7px" width="13" height="11" viewBox="0 0 13 11"><rect width="13" height="11" fill="#6db545"/><polyline points="2.60,9.50 4.30,7.20 5.50,8.70 6.70,6.10 7.60,6.90 10.30,2.80" fill="none" stroke="#f2f8ec" stroke-width="1.15" stroke-linejoin="round" stroke-linecap="round"/><circle cx="10.50" cy="2.5" r="1.0" fill="#f2f8ec"/></svg>
<svg class="a" style="left:1007px;top:544.7px" width="11" height="11" viewBox="0 0 11 11"><rect width="11" height="11" fill="#6db545"/><polyline points="2.20,9.50 3.64,7.20 4.65,8.70 5.67,6.10 6.43,6.90 8.72,2.80" fill="none" stroke="#f2f8ec" stroke-width="1.15" stroke-linejoin="round" stroke-linecap="round"/><circle cx="8.88" cy="2.5" r="1.0" fill="#f2f8ec"/></svg>
<div class="c" style="left:46px;top:540.70px;width:51px;">277</div>
<div class="c" style="left:98px;top:540.70px;width:42px;">-13</div>
<div class="c" style="left:141px;top:540.70px;width:56px;">385</div>
<div class="c" style="left:198px;top:540.70px;width:32px;">-</div>
<div class="c" style="left:231px;top:540.70px;width:43px;"><span class="k">729.50</span></div>
<div class="c g" style="left:275px;top:540.70px;width:42px;">108.30</div>
<div class="c" style="left:318px;top:540.70px;width:43px;">50</div>
<div class="c" style="left:362px;top:540.70px;width:43px;">731.40</div>
<div class="c" style="left:406px;top:540.70px;width:41px;">766.80</div>
<div class="c" style="left:448px;top:540.70px;width:43px;">1,500</div>
<div class="c" style="left:492px;top:540.70px;width:62px;"><span class="k">18,800.00</span></div>
<div class="c" style="left:555px;top:540.70px;width:44px;">1,800</div>
<div class="c" style="left:600px;top:540.70px;width:41px;">2.65</div>
<div class="c" style="left:642px;top:540.70px;width:43px;">3.25</div>
<div class="c" style="left:686px;top:540.70px;width:43px;">100</div>
<div class="c r" style="left:730px;top:540.70px;width:42px;">-2.80</div>
<div class="c" style="left:773px;top:540.70px;width:43px;"><span class="k">2.70</span></div>
<div class="c" style="left:817px;top:540.70px;width:32px;">14.86</div>
<div class="c" style="left:850px;top:540.70px;width:56px;">6,93,712</div>
<div class="c" style="left:907px;top:540.70px;width:41px;">26,629</div>
<div class="c" style="left:949px;top:540.70px;width:51px;">56,875</div>
<div class="a" style="left:23px;top:558px;width:22px;height:17px;background:#fff;"></div>
<div class="a" style="left:46px;top:558px;width:51px;height:17px;background:#f0eed8;"></div>
<div class="a" style="left:98px;top:558px;width:42px;height:17px;background:#f0eed8;"></div>
<div class="a" style="left:141px;top:558px;width:56px;height:17px;background:#f0eed8;"></div>
<div class="a" style="left:198px;top:558px;width:32px;height:17px;background:#f0eed8;"></div>
<div class="a" style="left:231px;top:558px;width:43px;height:17px;background:#f0eed8;"></div>
<div class="a" style="left:275px;top:558px;width:42px;height:17px;background:#f0eed8;"></div>
<div class="a" style="left:318px;top:558px;width:43px;height:17px;background:#f0eed8;"></div>
<div class="a" style="left:362px;top:558px;width:43px;height:17px;background:#f0eed8;"></div>
<div class="a" style="left:406px;top:558px;width:41px;height:17px;background:#f0eed8;"></div>
<div class="a" style="left:448px;top:558px;width:43px;height:17px;background:#f0eed8;"></div>
<div class="a" style="left:492px;top:558px;width:62px;height:17px;background:#fff;"></div>
<div class="a" style="left:555px;top:558px;width:44px;height:17px;background:#fff;"></div>
<div class="a" style="left:600px;top:558px;width:41px;height:17px;background:#fff;"></div>
<div class="a" style="left:642px;top:558px;width:43px;height:17px;background:#fff;"></div>
<div class="a" style="left:686px;top:558px;width:43px;height:17px;background:#fff;"></div>
<div class="a" style="left:730px;top:558px;width:42px;height:17px;background:#fff;"></div>
<div class="a" style="left:773px;top:558px;width:43px;height:17px;background:#fff;"></div>
<div class="a" style="left:817px;top:558px;width:32px;height:17px;background:#fff;"></div>
<div class="a" style="left:850px;top:558px;width:56px;height:17px;background:#fff;"></div>
<div class="a" style="left:907px;top:558px;width:41px;height:17px;background:#fff;"></div>
<div class="a" style="left:949px;top:558px;width:51px;height:17px;background:#fff;"></div>
<div class="a" style="left:1001px;top:558px;width:23px;height:17px;background:#fff;"></div>
<svg class="a" style="left:27px;top:562.7px" width="13" height="11" viewBox="0 0 13 11"><rect width="13" height="11" fill="#6db545"/><polyline points="2.60,9.50 4.30,7.20 5.50,8.70 6.70,6.10 7.60,6.90 10.30,2.80" fill="none" stroke="#f2f8ec" stroke-width="1.15" stroke-linejoin="round" stroke-linecap="round"/><circle cx="10.50" cy="2.5" r="1.0" fill="#f2f8ec"/></svg>
<svg class="a" style="left:1007px;top:562.7px" width="11" height="11" viewBox="0 0 11 11"><rect width="11" height="11" fill="#6db545"/><polyline points="2.20,9.50 3.64,7.20 4.65,8.70 5.67,6.10 6.43,6.90 8.72,2.80" fill="none" stroke="#f2f8ec" stroke-width="1.15" stroke-linejoin="round" stroke-linecap="round"/><circle cx="8.88" cy="2.5" r="1.0" fill="#f2f8ec"/></svg>
<div class="c" style="left:46px;top:559.70px;width:51px;">82</div>
<div class="c" style="left:98px;top:559.70px;width:42px;">6</div>
<div class="c" style="left:141px;top:559.70px;width:56px;">81</div>
<div class="c" style="left:198px;top:559.70px;width:32px;">-</div>
<div class="c" style="left:231px;top:559.70px;width:43px;"><span class="k">681.00</span></div>
<div class="c g" style="left:275px;top:559.70px;width:42px;">99.35</div>
<div class="c" style="left:318px;top:559.70px;width:43px;">900</div>
<div class="c" style="left:362px;top:559.70px;width:43px;">679.40</div>
<div class="c" style="left:406px;top:559.70px;width:41px;">707.50</div>
<div class="c" style="left:448px;top:559.70px;width:43px;">150</div>
<div class="c" style="left:492px;top:559.70px;width:62px;"><span class="k">18,850.00</span></div>
<div class="c" style="left:555px;top:559.70px;width:44px;">1,800</div>
<div class="c" style="left:600px;top:559.70px;width:41px;">3.20</div>
<div class="c" style="left:642px;top:559.70px;width:43px;">3.75</div>
<div class="c" style="left:686px;top:559.70px;width:43px;">700</div>
<div class="c r" style="left:730px;top:559.70px;width:42px;">-3.30</div>
<div class="c" style="left:773px;top:559.70px;width:43px;"><span class="k">3.25</span></div>
<div class="c" style="left:817px;top:559.70px;width:32px;">14.41</div>
<div class="c" style="left:850px;top:559.70px;width:56px;">2,59,400</div>
<div class="c" style="left:907px;top:559.70px;width:41px;">12,005</div>
<div class="c" style="left:949px;top:559.70px;width:51px;">23,460</div>
<div class="a" style="left:23px;top:576px;width:22px;height:18px;background:#fff;"></div>
<div class="a" style="left:46px;top:576px;width:51px;height:18px;background:#f0eed8;"></div>
<div class="a" style="left:98px;top:576px;width:42px;height:18px;background:#f0eed8;"></div>
<div class="a" style="left:141px;top:576px;width:56px;height:18px;background:#f0eed8;"></div>
<div class="a" style="left:198px;top:576px;width:32px;height:18px;background:#f0eed8;"></div>
<div class="a" style="left:231px;top:576px;width:43px;height:18px;background:#f0eed8;"></div>
<div class="a" style="left:275px;top:576px;width:42px;height:18px;background:#f0eed8;"></div>
<div class="a" style="left:318px;top:576px;width:43px;height:18px;background:#f0eed8;"></div>
<div class="a" style="left:362px;top:576px;width:43px;height:18px;background:#f0eed8;"></div>
<div class="a" style="left:406px;top:576px;width:41px;height:18px;background:#f0eed8;"></div>
<div class="a" style="left:448px;top:576px;width:43px;height:18px;background:#f0eed8;"></div>
<div class="a" style="left:492px;top:576px;width:62px;height:18px;background:#fff;"></div>
<div class="a" style="left:555px;top:576px;width:44px;height:18px;background:#fff;"></div>
<div class="a" style="left:600px;top:576px;width:41px;height:18px;background:#fff;"></div>
<div class="a" style="left:642px;top:576px;width:43px;height:18px;background:#fff;"></div>
<div class="a" style="left:686px;top:576px;width:43px;height:18px;background:#fff;"></div>
<div class="a" style="left:730px;top:576px;width:42px;height:18px;background:#fff;"></div>
<div class="a" style="left:773px;top:576px;width:43px;height:18px;background:#fff;"></div>
<div class="a" style="left:817px;top:576px;width:32px;height:18px;background:#fff;"></div>
<div class="a" style="left:850px;top:576px;width:56px;height:18px;background:#fff;"></div>
<div class="a" style="left:907px;top:576px;width:41px;height:18px;background:#fff;"></div>
<div class="a" style="left:949px;top:576px;width:51px;height:18px;background:#fff;"></div>
<div class="a" style="left:1001px;top:576px;width:23px;height:18px;background:#fff;"></div>
<svg class="a" style="left:27px;top:581.7px" width="13" height="11" viewBox="0 0 13 11"><rect width="13" height="11" fill="#6db545"/><polyline points="2.60,9.50 4.30,7.20 5.50,8.70 6.70,6.10 7.60,6.90 10.30,2.80" fill="none" stroke="#f2f8ec" stroke-width="1.15" stroke-linejoin="round" stroke-linecap="round"/><circle cx="10.50" cy="2.5" r="1.0" fill="#f2f8ec"/></svg>
<svg class="a" style="left:1007px;top:581.7px" width="11" height="11" viewBox="0 0 11 11"><rect width="11" height="11" fill="#6db545"/><polyline points="2.20,9.50 3.64,7.20 4.65,8.70 5.67,6.10 6.43,6.90 8.72,2.80" fill="none" stroke="#f2f8ec" stroke-width="1.15" stroke-linejoin="round" stroke-linecap="round"/><circle cx="8.88" cy="2.5" r="1.0" fill="#f2f8ec"/></svg>
<div class="c" style="left:46px;top:577.70px;width:51px;">235</div>
<div class="c" style="left:98px;top:577.70px;width:42px;">36</div>
<div class="c" style="left:141px;top:577.70px;width:56px;">290</div>
<div class="c" style="left:198px;top:577.70px;width:32px;">-</div>
<div class="c" style="left:231px;top:577.70px;width:43px;"><span class="k">635.45</span></div>
<div class="c g" style="left:275px;top:577.70px;width:42px;">108.10</div>
<div class="c" style="left:318px;top:577.70px;width:43px;">100</div>
<div class="c" style="left:362px;top:577.70px;width:43px;">629.85</div>
<div class="c" style="left:406px;top:577.70px;width:41px;">658.85</div>
<div class="c" style="left:448px;top:577.70px;width:43px;">750</div>
<div class="c" style="left:492px;top:577.70px;width:62px;"><span class="k">18,900.00</span></div>
<div class="c" style="left:555px;top:577.70px;width:44px;">2,850</div>
<div class="c" style="left:600px;top:577.70px;width:41px;">3.80</div>
<div class="c" style="left:642px;top:577.70px;width:43px;">4.20</div>
<div class="c" style="left:686px;top:577.70px;width:43px;">1,750</div>
<div class="c r" style="left:730px;top:577.70px;width:42px;">-4.50</div>
<div class="c" style="left:773px;top:577.70px;width:43px;"><span class="k">3.85</span></div>
<div class="c" style="left:817px;top:577.70px;width:32px;">13.91</div>
<div class="c" style="left:850px;top:577.70px;width:56px;">6,74,741</div>
<div class="c" style="left:907px;top:577.70px;width:41px;">37,783</div>
<div class="c" style="left:949px;top:577.70px;width:51px;">69,446</div>
<div class="a" style="left:23px;top:595px;width:22px;height:18px;background:#fff;"></div>
<div class="a" style="left:46px;top:595px;width:51px;height:18px;background:#f0eed8;"></div>
<div class="a" style="left:98px;top:595px;width:42px;height:18px;background:#f0eed8;"></div>
<div class="a" style="left:141px;top:595px;width:56px;height:18px;background:#f0eed8;"></div>
<div class="a" style="left:198px;top:595px;width:32px;height:18px;background:#f0eed8;"></div>
<div class="a" style="left:231px;top:595px;width:43px;height:18px;background:#f0eed8;"></div>
<div class="a" style="left:275px;top:595px;width:42px;height:18px;background:#f0eed8;"></div>
<div class="a" style="left:318px;top:595px;width:43px;height:18px;background:#f0eed8;"></div>
<div class="a" style="left:362px;top:595px;width:43px;height:18px;background:#f0eed8;"></div>
<div class="a" style="left:406px;top:595px;width:41px;height:18px;background:#f0eed8;"></div>
<div class="a" style="left:448px;top:595px;width:43px;height:18px;background:#f0eed8;"></div>
<div class="a" style="left:492px;top:595px;width:62px;height:18px;background:#fff;"></div>
<div class="a" style="left:555px;top:595px;width:44px;height:18px;background:#fff;"></div>
<div class="a" style="left:600px;top:595px;width:41px;height:18px;background:#fff;"></div>
<div class="a" style="left:642px;top:595px;width:43px;height:18px;background:#fff;"></div>
<div class="a" style="left:686px;top:595px;width:43px;height:18px;background:#fff;"></div>
<div class="a" style="left:730px;top:595px;width:42px;height:18px;background:#fff;"></div>
<div class="a" style="left:773px;top:595px;width:43px;height:18px;background:#fff;"></div>
<div class="a" style="left:817px;top:595px;width:32px;height:18px;background:#fff;"></div>
<div class="a" style="left:850px;top:595px;width:56px;height:18px;background:#fff;"></div>
<div class="a" style="left:907px;top:595px;width:41px;height:18px;background:#fff;"></div>
<div class="a" style="left:949px;top:595px;width:51px;height:18px;background:#fff;"></div>
<div class="a" style="left:1001px;top:595px;width:23px;height:18px;background:#fff;"></div>
<svg class="a" style="left:27px;top:600.7px" width="13" height="11" viewBox="0 0 13 11"><rect width="13" height="11" fill="#6db545"/><polyline points="2.60,9.50 4.30,7.20 5.50,8.70 6.70,6.10 7.60,6.90 10.30,2.80" fill="none" stroke="#f2f8ec" stroke-width="1.15" stroke-linejoin="round" stroke-linecap="round"/><circle cx="10.50" cy="2.5" r="1.0" fill="#f2f8ec"/></svg>
<svg class="a" style="left:1007px;top:600.7px" width="11" height="11" viewBox="0 0 11 11"><rect width="11" height="11" fill="#6db545"/><polyline points="2.20,9.50 3.64,7.20 4.65,8.70 5.67,6.10 6.43,6.90 8.72,2.80" fill="none" stroke="#f2f8ec" stroke-width="1.15" stroke-linejoin="round" stroke-linecap="round"/><circle cx="8.88" cy="2.5" r="1.0" fill="#f2f8ec"/></svg>
<div class="c" style="left:46px;top:596.70px;width:51px;">178</div>
<div class="c" style="left:98px;top:596.70px;width:42px;">-8</div>
<div class="c" style="left:141px;top:596.70px;width:56px;">251</div>
<div class="c" style="left:198px;top:596.70px;width:32px;">-</div>
<div class="c" style="left:231px;top:596.70px;width:43px;"><span class="k">581.15</span></div>
<div class="c g" style="left:275px;top:596.70px;width:42px;">105.85</div>
<div class="c" style="left:318px;top:596.70px;width:43px;">6,000</div>
<div class="c" style="left:362px;top:596.70px;width:43px;">548.55</div>
<div class="c" style="left:406px;top:596.70px;width:41px;">586.35</div>
<div class="c" style="left:448px;top:596.70px;width:43px;">200</div>
<div class="c" style="left:492px;top:596.70px;width:62px;"><span class="k">18,950.00</span></div>
<div class="c" style="left:555px;top:596.70px;width:44px;">200</div>
<div class="c" style="left:600px;top:596.70px;width:41px;">4.25</div>
<div class="c" style="left:642px;top:596.70px;width:43px;">4.60</div>
<div class="c" style="left:686px;top:596.70px;width:43px;">400</div>
<div class="c r" style="left:730px;top:596.70px;width:42px;">-6.15</div>
<div class="c" style="left:773px;top:596.70px;width:43px;"><span class="k">4.25</span></div>
<div class="c" style="left:817px;top:596.70px;width:32px;">13.23</div>
<div class="c" style="left:850px;top:596.70px;width:56px;">3,88,571</div>
<div class="c" style="left:907px;top:596.70px;width:41px;">10,014</div>
<div class="c" style="left:949px;top:596.70px;width:51px;">18,699</div>
<div class="a" style="left:23px;top:614px;width:22px;height:17px;background:#fff;"></div>
<div class="a" style="left:46px;top:614px;width:51px;height:17px;background:#f0eed8;"></div>
<div class="a" style="left:98px;top:614px;width:42px;height:17px;background:#f0eed8;"></div>
<div class="a" style="left:141px;top:614px;width:56px;height:17px;background:#f0eed8;"></div>
<div class="a" style="left:198px;top:614px;width:32px;height:17px;background:#f0eed8;"></div>
<div class="a" style="left:231px;top:614px;width:43px;height:17px;background:#f0eed8;"></div>
<div class="a" style="left:275px;top:614px;width:42px;height:17px;background:#f0eed8;"></div>
<div class="a" style="left:318px;top:614px;width:43px;height:17px;background:#f0eed8;"></div>
<div class="a" style="left:362px;top:614px;width:43px;height:17px;background:#f0eed8;"></div>
<div class="a" style="left:406px;top:614px;width:41px;height:17px;background:#f0eed8;"></div>
<div class="a" style="left:448px;top:614px;width:43px;height:17px;background:#f0eed8;"></div>
<div class="a" style="left:492px;top:614px;width:62px;height:17px;background:#fff;"></div>
<div class="a" style="left:555px;top:614px;width:44px;height:17px;background:#fff;"></div>
<div class="a" style="left:600px;top:614px;width:41px;height:17px;background:#fff;"></div>
<div class="a" style="left:642px;top:614px;width:43px;height:17px;background:#fff;"></div>
<div class="a" style="left:686px;top:614px;width:43px;height:17px;background:#fff;"></div>
<div class="a" style="left:730px;top:614px;width:42px;height:17px;background:#fff;"></div>
<div class="a" style="left:773px;top:614px;width:43px;height:17px;background:#fff;"></div>
<div class="a" style="left:817px;top:614px;width:32px;height:17px;background:#fff;"></div>
<div class="a" style="left:850px;top:614px;width:56px;height:17px;background:#fff;"></div>
<div class="a" style="left:907px;top:614px;width:41px;height:17px;background:#fff;"></div>
<div class="a" style="left:949px;top:614px;width:51px;height:17px;background:#fff;"></div>
<div class="a" style="left:1001px;top:614px;width:23px;height:17px;background:#fff;"></div>
<svg class="a" style="left:27px;top:618.7px" width="13" height="11" viewBox="0 0 13 11"><rect width="13" height="11" fill="#6db545"/><polyline points="2.60,9.50 4.30,7.20 5.50,8.70 6.70,6.10 7.60,6.90 10.30,2.80" fill="none" stroke="#f2f8ec" stroke-width="1.15" stroke-linejoin="round" stroke-linecap="round"/><circle cx="10.50" cy="2.5" r="1.0" fill="#f2f8ec"/></svg>
<svg class="a" style="left:1007px;top:618.7px" width="11" height="11" viewBox="0 0 11 11"><rect width="11" height="11" fill="#6db545"/><polyline points="2.20,9.50 3.64,7.20 4.65,8.70 5.67,6.10 6.43,6.90 8.72,2.80" fill="none" stroke="#f2f8ec" stroke-width="1.15" stroke-linejoin="round" stroke-linecap="round"/><circle cx="8.88" cy="2.5" r="1.0" fill="#f2f8ec"/></svg>
<div class="c" style="left:46px;top:615.70px;width:51px;">4,859</div>
<div class="c" style="left:98px;top:615.70px;width:42px;">394</div>
<div class="c" style="left:141px;top:615.70px;width:56px;">11,588</div>
<div class="c" style="left:198px;top:615.70px;width:32px;">-</div>
<div class="c" style="left:231px;top:615.70px;width:43px;"><span class="k">533.00</span></div>
<div class="c g" style="left:275px;top:615.70px;width:42px;">107.70</div>
<div class="c" style="left:318px;top:615.70px;width:43px;">200</div>
<div class="c" style="left:362px;top:615.70px;width:43px;">532.85</div>
<div class="c" style="left:406px;top:615.70px;width:41px;">536.85</div>
<div class="c" style="left:448px;top:615.70px;width:43px;">250</div>
<div class="c" style="left:492px;top:615.70px;width:62px;"><span class="k">19,000.00</span></div>
<div class="c" style="left:555px;top:615.70px;width:44px;">50</div>
<div class="c" style="left:600px;top:615.70px;width:41px;">5.25</div>
<div class="c" style="left:642px;top:615.70px;width:43px;">5.80</div>
<div class="c" style="left:686px;top:615.70px;width:43px;">2,050</div>
<div class="c r" style="left:730px;top:615.70px;width:42px;">-7.90</div>
<div class="c" style="left:773px;top:615.70px;width:43px;"><span class="k">5.80</span></div>
<div class="c" style="left:817px;top:615.70px;width:32px;">13.03</div>
<div class="c" style="left:850px;top:615.70px;width:56px;">9,03,059</div>
<div class="c" style="left:907px;top:615.70px;width:41px;">31,174</div>
<div class="c" style="left:949px;top:615.70px;width:51px;">85,561</div>
<div class="a" style="left:23px;top:632px;width:22px;height:18px;background:#fff;"></div>
<div class="a" style="left:46px;top:632px;width:51px;height:18px;background:#f0eed8;"></div>
<div class="a" style="left:98px;top:632px;width:42px;height:18px;background:#f0eed8;"></div>
<div class="a" style="left:141px;top:632px;width:56px;height:18px;background:#f0eed8;"></div>
<div class="a" style="left:198px;top:632px;width:32px;height:18px;background:#f0eed8;"></div>
<div class="a" style="left:231px;top:632px;width:43px;height:18px;background:#f0eed8;"></div>
<div class="a" style="left:275px;top:632px;width:42px;height:18px;background:#f0eed8;"></div>
<div class="a" style="left:318px;top:632px;width:43px;height:18px;background:#f0eed8;"></div>
<div class="a" style="left:362px;top:632px;width:43px;height:18px;background:#f0eed8;"></div>
<div class="a" style="left:406px;top:632px;width:41px;height:18px;background:#f0eed8;"></div>
<div class="a" style="left:448px;top:632px;width:43px;height:18px;background:#f0eed8;"></div>
<div class="a" style="left:492px;top:632px;width:62px;height:18px;background:#fff;"></div>
<div class="a" style="left:555px;top:632px;width:44px;height:18px;background:#fff;"></div>
<div class="a" style="left:600px;top:632px;width:41px;height:18px;background:#fff;"></div>
<div class="a" style="left:642px;top:632px;width:43px;height:18px;background:#fff;"></div>
<div class="a" style="left:686px;top:632px;width:43px;height:18px;background:#fff;"></div>
<div class="a" style="left:730px;top:632px;width:42px;height:18px;background:#fff;"></div>
<div class="a" style="left:773px;top:632px;width:43px;height:18px;background:#fff;"></div>
<div class="a" style="left:817px;top:632px;width:32px;height:18px;background:#fff;"></div>
<div class="a" style="left:850px;top:632px;width:56px;height:18px;background:#fff;"></div>
<div class="a" style="left:907px;top:632px;width:41px;height:18px;background:#fff;"></div>
<div class="a" style="left:949px;top:632px;width:51px;height:18px;background:#fff;"></div>
<div class="a" style="left:1001px;top:632px;width:23px;height:18px;background:#fff;"></div>
<svg class="a" style="left:27px;top:637.7px" width="13" height="11" viewBox="0 0 13 11"><rect width="13" height="11" fill="#6db545"/><polyline points="2.60,9.50 4.30,7.20 5.50,8.70 6.70,6.10 7.60,6.90 10.30,2.80" fill="none" stroke="#f2f8ec" stroke-width="1.15" stroke-linejoin="round" stroke-linecap="round"/><circle cx="10.50" cy="2.5" r="1.0" fill="#f2f8ec"/></svg>
<svg class="a" style="left:1007px;top:637.7px" width="11" height="11" viewBox="0 0 11 11"><rect width="11" height="11" fill="#6db545"/><polyline points="2.20,9.50 3.64,7.20 4.65,8.70 5.67,6.10 6.43,6.90 8.72,2.80" fill="none" stroke="#f2f8ec" stroke-width="1.15" stroke-linejoin="round" stroke-linecap="round"/><circle cx="8.88" cy="2.5" r="1.0" fill="#f2f8ec"/></svg>
<div class="c" style="left:46px;top:633.70px;width:51px;">186</div>
<div class="c" style="left:98px;top:633.70px;width:42px;">-33</div>
<div class="c" style="left:141px;top:633.70px;width:56px;">725</div>
<div class="c" style="left:198px;top:633.70px;width:32px;">-</div>
<div class="c" style="left:231px;top:633.70px;width:43px;"><span class="k">484.60</span></div>
<div class="c g" style="left:275px;top:633.70px;width:42px;">104.80</div>
<div class="c" style="left:318px;top:633.70px;width:43px;">200</div>
<div class="c" style="left:362px;top:633.70px;width:43px;">483.30</div>
<div class="c" style="left:406px;top:633.70px;width:41px;">487.90</div>
<div class="c" style="left:448px;top:633.70px;width:43px;">250</div>
<div class="c" style="left:492px;top:633.70px;width:62px;"><span class="k">19,050.00</span></div>
<div class="c" style="left:555px;top:633.70px;width:44px;">50</div>
<div class="c" style="left:600px;top:633.70px;width:41px;">5.90</div>
<div class="c" style="left:642px;top:633.70px;width:43px;">6.60</div>
<div class="c" style="left:686px;top:633.70px;width:43px;">100</div>
<div class="c r" style="left:730px;top:633.70px;width:42px;">-11.60</div>
<div class="c" style="left:773px;top:633.70px;width:43px;"><span class="k">5.90</span></div>
<div class="c" style="left:817px;top:633.70px;width:32px;">12.09</div>
<div class="c" style="left:850px;top:633.70px;width:56px;">5,36,728</div>
<div class="c" style="left:907px;top:633.70px;width:41px;">6,098</div>
<div class="c" style="left:949px;top:633.70px;width:51px;">16,144</div>
<div class="a" style="left:23px;top:651px;width:22px;height:17px;background:#fff;"></div>
<div class="a" style="left:46px;top:651px;width:51px;height:17px;background:#f0eed8;"></div>
<div class="a" style="left:98px;top:651px;width:42px;height:17px;background:#f0eed8;"></div>
<div class="a" style="left:141px;top:651px;width:56px;height:17px;background:#f0eed8;"></div>
<div class="a" style="left:198px;top:651px;width:32px;height:17px;background:#f0eed8;"></div>
<div class="a" style="left:231px;top:651px;width:43px;height:17px;background:#f0eed8;"></div>
<div class="a" style="left:275px;top:651px;width:42px;height:17px;background:#f0eed8;"></div>
<div class="a" style="left:318px;top:651px;width:43px;height:17px;background:#f0eed8;"></div>
<div class="a" style="left:362px;top:651px;width:43px;height:17px;background:#f0eed8;"></div>
<div class="a" style="left:406px;top:651px;width:41px;height:17px;background:#f0eed8;"></div>
<div class="a" style="left:448px;top:651px;width:43px;height:17px;background:#f0eed8;"></div>
<div class="a" style="left:492px;top:651px;width:62px;height:17px;background:#fff;"></div>
<div class="a" style="left:555px;top:651px;width:44px;height:17px;background:#fff;"></div>
<div class="a" style="left:600px;top:651px;width:41px;height:17px;background:#fff;"></div>
<div class="a" style="left:642px;top:651px;width:43px;height:17px;background:#fff;"></div>
<div class="a" style="left:686px;top:651px;width:43px;height:17px;background:#fff;"></div>
<div class="a" style="left:730px;top:651px;width:42px;height:17px;background:#fff;"></div>
<div class="a" style="left:773px;top:651px;width:43px;height:17px;background:#fff;"></div>
<div class="a" style="left:817px;top:651px;width:32px;height:17px;background:#fff;"></div>
<div class="a" style="left:850px;top:651px;width:56px;height:17px;background:#fff;"></div>
<div class="a" style="left:907px;top:651px;width:41px;height:17px;background:#fff;"></div>
<div class="a" style="left:949px;top:651px;width:51px;height:17px;background:#fff;"></div>
<div class="a" style="left:1001px;top:651px;width:23px;height:17px;background:#fff;"></div>
<svg class="a" style="left:27px;top:655.7px" width="13" height="11" viewBox="0 0 13 11"><rect width="13" height="11" fill="#6db545"/><polyline points="2.60,9.50 4.30,7.20 5.50,8.70 6.70,6.10 7.60,6.90 10.30,2.80" fill="none" stroke="#f2f8ec" stroke-width="1.15" stroke-linejoin="round" stroke-linecap="round"/><circle cx="10.50" cy="2.5" r="1.0" fill="#f2f8ec"/></svg>
<svg class="a" style="left:1007px;top:655.7px" width="11" height="11" viewBox="0 0 11 11"><rect width="11" height="11" fill="#6db545"/><polyline points="2.20,9.50 3.64,7.20 4.65,8.70 5.67,6.10 6.43,6.90 8.72,2.80" fill="none" stroke="#f2f8ec" stroke-width="1.15" stroke-linejoin="round" stroke-linecap="round"/><circle cx="8.88" cy="2.5" r="1.0" fill="#f2f8ec"/></svg>
<div class="c" style="left:46px;top:652.70px;width:51px;">1,501</div>
<div class="c" style="left:98px;top:652.70px;width:42px;">510</div>
<div class="c" style="left:141px;top:652.70px;width:56px;">8,049</div>
<div class="c" style="left:198px;top:652.70px;width:32px;">-</div>
<div class="c" style="left:231px;top:652.70px;width:43px;"><span class="k">438.00</span></div>
<div class="c g" style="left:275px;top:652.70px;width:42px;">103.00</div>
<div class="c" style="left:318px;top:652.70px;width:43px;">200</div>
<div class="c" style="left:362px;top:652.70px;width:43px;">435.20</div>
<div class="c" style="left:406px;top:652.70px;width:41px;">440.50</div>
<div class="c" style="left:448px;top:652.70px;width:43px;">250</div>
<div class="c" style="left:492px;top:652.70px;width:62px;"><span class="k">19,100.00</span></div>
<div class="c" style="left:555px;top:652.70px;width:44px;">200</div>
<div class="c" style="left:600px;top:652.70px;width:41px;">7.50</div>
<div class="c" style="left:642px;top:652.70px;width:43px;">8.30</div>
<div class="c" style="left:686px;top:652.70px;width:43px;">550</div>
<div class="c r" style="left:730px;top:652.70px;width:42px;">-14.60</div>
<div class="c" style="left:773px;top:652.70px;width:43px;"><span class="k">8.30</span></div>
<div class="c" style="left:817px;top:652.70px;width:32px;">11.94</div>
<div class="c" style="left:850px;top:652.70px;width:56px;">10,41,839</div>
<div class="c" style="left:907px;top:652.70px;width:41px;">38,496</div>
<div class="c" style="left:949px;top:652.70px;width:51px;">69,317</div>
<div class="a" style="left:23px;top:669px;width:22px;height:18px;background:#fff;"></div>
<div class="a" style="left:46px;top:669px;width:51px;height:18px;background:#f0eed8;"></div>
<div class="a" style="left:98px;top:669px;width:42px;height:18px;background:#f0eed8;"></div>
<div class="a" style="left:141px;top:669px;width:56px;height:18px;background:#f0eed8;"></div>
<div class="a" style="left:198px;top:669px;width:32px;height:18px;background:#f0eed8;"></div>
<div class="a" style="left:231px;top:669px;width:43px;height:18px;background:#f0eed8;"></div>
<div class="a" style="left:275px;top:669px;width:42px;height:18px;background:#f0eed8;"></div>
<div class="a" style="left:318px;top:669px;width:43px;height:18px;background:#f0eed8;"></div>
<div class="a" style="left:362px;top:669px;width:43px;height:18px;background:#f0eed8;"></div>
<div class="a" style="left:406px;top:669px;width:41px;height:18px;background:#f0eed8;"></div>
<div class="a" style="left:448px;top:669px;width:43px;height:18px;background:#f0eed8;"></div>
<div class="a" style="left:492px;top:669px;width:62px;height:18px;background:#fff;"></div>
<div class="a" style="left:555px;top:669px;width:44px;height:18px;background:#fff;"></div>
<div class="a" style="left:600px;top:669px;width:41px;height:18px;background:#fff;"></div>
<div class="a" style="left:642px;top:669px;width:43px;height:18px;background:#fff;"></div>
<div class="a" style="left:686px;top:669px;width:43px;height:18px;background:#fff;"></div>
<div class="a" style="left:730px;top:669px;width:42px;height:18px;background:#fff;"></div>
<div class="a" style="left:773px;top:669px;width:43px;height:18px;background:#fff;"></div>
<div class="a" style="left:817px;top:669px;width:32px;height:18px;background:#fff;"></div>
<div class="a" style="left:850px;top:669px;width:56px;height:18px;background:#fff;"></div>
<div class="a" style="left:907px;top:669px;width:41px;height:18px;background:#fff;"></div>
<div class="a" style="left:949px;top:669px;width:51px;height:18px;background:#fff;"></div>
<div class="a" style="left:1001px;top:669px;width:23px;height:18px;background:#fff;"></div>
<svg class="a" style="left:27px;top:674.7px" width="13" height="11" viewBox="0 0 13 11"><rect width="13" height="11" fill="#6db545"/><polyline points="2.60,9.50 4.30,7.20 5.50,8.70 6.70,6.10 7.60,6.90 10.30,2.80" fill="none" stroke="#f2f8ec" stroke-width="1.15" stroke-linejoin="round" stroke-linecap="round"/><circle cx="10.50" cy="2.5" r="1.0" fill="#f2f8ec"/></svg>
<svg class="a" style="left:1007px;top:674.7px" width="11" height="11" viewBox="0 0 11 11"><rect width="11" height="11" fill="#6db545"/><polyline points="2.20,9.50 3.64,7.20 4.65,8.70 5.67,6.10 6.43,6.90 8.72,2.80" fill="none" stroke="#f2f8ec" stroke-width="1.15" stroke-linejoin="round" stroke-linecap="round"/><circle cx="8.88" cy="2.5" r="1.0" fill="#f2f8ec"/></svg>
<div class="c" style="left:46px;top:670.70px;width:51px;">531</div>
<div class="c" style="left:98px;top:670.70px;width:42px;">-350</div>
<div class="c" style="left:141px;top:670.70px;width:56px;">2,665</div>
<div class="c" style="left:198px;top:670.70px;width:32px;">-</div>
<div class="c" style="left:231px;top:670.70px;width:43px;"><span class="k">388.95</span></div>
<div class="c g" style="left:275px;top:670.70px;width:42px;">96.05</div>
<div class="c" style="left:318px;top:670.70px;width:43px;">450</div>
<div class="c" style="left:362px;top:670.70px;width:43px;">357.55</div>
<div class="c" style="left:406px;top:670.70px;width:41px;">390.75</div>
<div class="c" style="left:448px;top:670.70px;width:43px;">50</div>
<div class="c" style="left:492px;top:670.70px;width:62px;"><span class="k">19,150.00</span></div>
<div class="c" style="left:555px;top:670.70px;width:44px;">1,100</div>
<div class="c" style="left:600px;top:670.70px;width:41px;">9.15</div>
<div class="c" style="left:642px;top:670.70px;width:43px;">9.45</div>
<div class="c" style="left:686px;top:670.70px;width:43px;">1,250</div>
<div class="c r" style="left:730px;top:670.70px;width:42px;">-20.10</div>
<div class="c" style="left:773px;top:670.70px;width:43px;"><span class="k">9.15</span></div>
<div class="c" style="left:817px;top:670.70px;width:32px;">11.13</div>
<div class="c" style="left:850px;top:670.70px;width:56px;">8,46,157</div>
<div class="c" style="left:907px;top:670.70px;width:41px;">9,855</div>
<div class="c" style="left:949px;top:670.70px;width:51px;">23,411</div>
<div class="a" style="left:23px;top:688px;width:22px;height:18px;background:#fff;"></div>
<div class="a" style="left:46px;top:688px;width:51px;height:18px;background:#f0eed8;"></div>
<div class="a" style="left:98px;top:688px;width:42px;height:18px;background:#f0eed8;"></div>
<div class="a" style="left:141px;top:688px;width:56px;height:18px;background:#f0eed8;"></div>
<div class="a" style="left:198px;top:688px;width:32px;height:18px;background:#f0eed8;"></div>
<div class="a" style="left:231px;top:688px;width:43px;height:18px;background:#f0eed8;"></div>
<div class="a" style="left:275px;top:688px;width:42px;height:18px;background:#f0eed8;"></div>
<div class="a" style="left:318px;top:688px;width:43px;height:18px;background:#f0eed8;"></div>
<div class="a" style="left:362px;top:688px;width:43px;height:18px;background:#f0eed8;"></div>
<div class="a" style="left:406px;top:688px;width:41px;height:18px;background:#f0eed8;"></div>
<div class="a" style="left:448px;top:688px;width:43px;height:18px;background:#f0eed8;"></div>
<div class="a" style="left:492px;top:688px;width:62px;height:18px;background:#fff;"></div>
<div class="a" style="left:555px;top:688px;width:44px;height:18px;background:#fff;"></div>
<div class="a" style="left:600px;top:688px;width:41px;height:18px;background:#fff;"></div>
<div class="a" style="left:642px;top:688px;width:43px;height:18px;background:#fff;"></div>
<div class="a" style="left:686px;top:688px;width:43px;height:18px;background:#fff;"></div>
<div class="a" style="left:730px;top:688px;width:42px;height:18px;background:#fff;"></div>
<div class="a" style="left:773px;top:688px;width:43px;height:18px;background:#fff;"></div>
<div class="a" style="left:817px;top:688px;width:32px;height:18px;background:#fff;"></div>
<div class="a" style="left:850px;top:688px;width:56px;height:18px;background:#fff;"></div>
<div class="a" style="left:907px;top:688px;width:41px;height:18px;background:#fff;"></div>
<div class="a" style="left:949px;top:688px;width:51px;height:18px;background:#fff;"></div>
<div class="a" style="left:1001px;top:688px;width:23px;height:18px;background:#fff;"></div>
<svg class="a" style="left:27px;top:693.7px" width="13" height="11" viewBox="0 0 13 11"><rect width="13" height="11" fill="#6db545"/><polyline points="2.60,9.50 4.30,7.20 5.50,8.70 6.70,6.10 7.60,6.90 10.30,2.80" fill="none" stroke="#f2f8ec" stroke-width="1.15" stroke-linejoin="round" stroke-linecap="round"/><circle cx="10.50" cy="2.5" r="1.0" fill="#f2f8ec"/></svg>
<svg class="a" style="left:1007px;top:693.7px" width="11" height="11" viewBox="0 0 11 11"><rect width="11" height="11" fill="#6db545"/><polyline points="2.20,9.50 3.64,7.20 4.65,8.70 5.67,6.10 6.43,6.90 8.72,2.80" fill="none" stroke="#f2f8ec" stroke-width="1.15" stroke-linejoin="round" stroke-linecap="round"/><circle cx="8.88" cy="2.5" r="1.0" fill="#f2f8ec"/></svg>
<div class="c" style="left:46px;top:689.70px;width:51px;">2,843</div>
<div class="c" style="left:98px;top:689.70px;width:42px;">-1,621</div>
<div class="c" style="left:141px;top:689.70px;width:56px;">52,411</div>
<div class="c" style="left:198px;top:689.70px;width:32px;">-</div>
<div class="c" style="left:231px;top:689.70px;width:43px;"><span class="k">343.35</span></div>
<div class="c g" style="left:275px;top:689.70px;width:42px;">90.85</div>
<div class="c" style="left:318px;top:689.70px;width:43px;">100</div>
<div class="c" style="left:362px;top:689.70px;width:43px;">340.70</div>
<div class="c" style="left:406px;top:689.70px;width:41px;">343.35</div>
<div class="c" style="left:448px;top:689.70px;width:43px;">250</div>
<div class="c" style="left:492px;top:689.70px;width:62px;"><span class="k">19,200.00</span></div>
<div class="c" style="left:555px;top:689.70px;width:44px;">1,350</div>
<div class="c" style="left:600px;top:689.70px;width:41px;">11.90</div>
<div class="c" style="left:642px;top:689.70px;width:43px;">12.20</div>
<div class="c" style="left:686px;top:689.70px;width:43px;">200</div>
<div class="c r" style="left:730px;top:689.70px;width:42px;">-25.15</div>
<div class="c" style="left:773px;top:689.70px;width:43px;"><span class="k">12.20</span></div>
<div class="c" style="left:817px;top:689.70px;width:32px;">10.81</div>
<div class="c" style="left:850px;top:689.70px;width:56px;">16,09,038</div>
<div class="c" style="left:907px;top:689.70px;width:41px;">1,457</div>
<div class="c" style="left:949px;top:689.70px;width:51px;">63,097</div>
<div class="a" style="left:23px;top:707px;width:22px;height:17px;background:#fff;"></div>
<div class="a" style="left:46px;top:707px;width:51px;height:17px;background:#f0eed8;"></div>
<div class="a" style="left:98px;top:707px;width:42px;height:17px;background:#f0eed8;"></div>
<div class="a" style="left:141px;top:707px;width:56px;height:17px;background:#f0eed8;"></div>
<div class="a" style="left:198px;top:707px;width:32px;height:17px;background:#f0eed8;"></div>
<div class="a" style="left:231px;top:707px;width:43px;height:17px;background:#f0eed8;"></div>
<div class="a" style="left:275px;top:707px;width:42px;height:17px;background:#f0eed8;"></div>
<div class="a" style="left:318px;top:707px;width:43px;height:17px;background:#f0eed8;"></div>
<div class="a" style="left:362px;top:707px;width:43px;height:17px;background:#f0eed8;"></div>
<div class="a" style="left:406px;top:707px;width:41px;height:17px;background:#f0eed8;"></div>
<div class="a" style="left:448px;top:707px;width:43px;height:17px;background:#f0eed8;"></div>
<div class="a" style="left:492px;top:707px;width:62px;height:17px;background:#fff;"></div>
<div class="a" style="left:555px;top:707px;width:44px;height:17px;background:#fff;"></div>
<div class="a" style="left:600px;top:707px;width:41px;height:17px;background:#fff;"></div>
<div class="a" style="left:642px;top:707px;width:43px;height:17px;background:#fff;"></div>
<div class="a" style="left:686px;top:707px;width:43px;height:17px;background:#fff;"></div>
<div class="a" style="left:730px;top:707px;width:42px;height:17px;background:#fff;"></div>
<div class="a" style="left:773px;top:707px;width:43px;height:17px;background:#fff;"></div>
<div class="a" style="left:817px;top:707px;width:32px;height:17px;background:#fff;"></div>
<div class="a" style="left:850px;top:707px;width:56px;height:17px;background:#fff;"></div>
<div class="a" style="left:907px;top:707px;width:41px;height:17px;background:#fff;"></div>
<div class="a" style="left:949px;top:707px;width:51px;height:17px;background:#fff;"></div>
<div class="a" style="left:1001px;top:707px;width:23px;height:17px;background:#fff;"></div>
<svg class="a" style="left:27px;top:711.7px" width="13" height="11" viewBox="0 0 13 11"><rect width="13" height="11" fill="#6db545"/><polyline points="2.60,9.50 4.30,7.20 5.50,8.70 6.70,6.10 7.60,6.90 10.30,2.80" fill="none" stroke="#f2f8ec" stroke-width="1.15" stroke-linejoin="round" stroke-linecap="round"/><circle cx="10.50" cy="2.5" r="1.0" fill="#f2f8ec"/></svg>
<svg class="a" style="left:1007px;top:711.7px" width="11" height="11" viewBox="0 0 11 11"><rect width="11" height="11" fill="#6db545"/><polyline points="2.20,9.50 3.64,7.20 4.65,8.70 5.67,6.10 6.43,6.90 8.72,2.80" fill="none" stroke="#f2f8ec" stroke-width="1.15" stroke-linejoin="round" stroke-linecap="round"/><circle cx="8.88" cy="2.5" r="1.0" fill="#f2f8ec"/></svg>
<div class="c" style="left:46px;top:708.70px;width:51px;">1,341</div>
<div class="c" style="left:98px;top:708.70px;width:42px;">-844</div>
<div class="c" style="left:141px;top:708.70px;width:56px;">34,026</div>
<div class="c" style="left:198px;top:708.70px;width:32px;">-</div>
<div class="c" style="left:231px;top:708.70px;width:43px;"><span class="k">294.25</span></div>
<div class="c g" style="left:275px;top:708.70px;width:42px;">81.35</div>
<div class="c" style="left:318px;top:708.70px;width:43px;">200</div>
<div class="c" style="left:362px;top:708.70px;width:43px;">294.35</div>
<div class="c" style="left:406px;top:708.70px;width:41px;">297.15</div>
<div class="c" style="left:448px;top:708.70px;width:43px;">750</div>
<div class="c" style="left:492px;top:708.70px;width:62px;"><span class="k">19,250.00</span></div>
<div class="c" style="left:555px;top:708.70px;width:44px;">1,250</div>
<div class="c" style="left:600px;top:708.70px;width:41px;">15.60</div>
<div class="c" style="left:642px;top:708.70px;width:43px;">15.90</div>
<div class="c" style="left:686px;top:708.70px;width:43px;">1,200</div>
<div class="c r" style="left:730px;top:708.70px;width:42px;">-33.75</div>
<div class="c" style="left:773px;top:708.70px;width:43px;"><span class="k">15.65</span></div>
<div class="c" style="left:817px;top:708.70px;width:32px;">10.36</div>
<div class="c" style="left:850px;top:708.70px;width:56px;">11,12,237</div>
<div class="c" style="left:907px;top:708.70px;width:41px;">15,077</div>
<div class="c" style="left:949px;top:708.70px;width:51px;">31,769</div>
<div class="a" style="left:23px;top:725px;width:22px;height:18px;background:#fff;"></div>
<div class="a" style="left:46px;top:725px;width:51px;height:18px;background:#f0eed8;"></div>
<div class="a" style="left:98px;top:725px;width:42px;height:18px;background:#f0eed8;"></div>
<div class="a" style="left:141px;top:725px;width:56px;height:18px;background:#f0eed8;"></div>
<div class="a" style="left:198px;top:725px;width:32px;height:18px;background:#f0eed8;"></div>
<div class="a" style="left:231px;top:725px;width:43px;height:18px;background:#f0eed8;"></div>
<div class="a" style="left:275px;top:725px;width:42px;height:18px;background:#f0eed8;"></div>
<div class="a" style="left:318px;top:725px;width:43px;height:18px;background:#f0eed8;"></div>
<div class="a" style="left:362px;top:725px;width:43px;height:18px;background:#f0eed8;"></div>
<div class="a" style="left:406px;top:725px;width:41px;height:18px;background:#f0eed8;"></div>
<div class="a" style="left:448px;top:725px;width:43px;height:18px;background:#f0eed8;"></div>
<div class="a" style="left:492px;top:725px;width:62px;height:18px;background:#fff;"></div>
<div class="a" style="left:555px;top:725px;width:44px;height:18px;background:#fff;"></div>
<div class="a" style="left:600px;top:725px;width:41px;height:18px;background:#fff;"></div>
<div class="a" style="left:642px;top:725px;width:43px;height:18px;background:#fff;"></div>
<div class="a" style="left:686px;top:725px;width:43px;height:18px;background:#fff;"></div>
<div class="a" style="left:730px;top:725px;width:42px;height:18px;background:#fff;"></div>
<div class="a" style="left:773px;top:725px;width:43px;height:18px;background:#fff;"></div>
<div class="a" style="left:817px;top:725px;width:32px;height:18px;background:#fff;"></div>
<div class="a" style="left:850px;top:725px;width:56px;height:18px;background:#fff;"></div>
<div class="a" style="left:907px;top:725px;width:41px;height:18px;background:#fff;"></div>
<div class="a" style="left:949px;top:725px;width:51px;height:18px;background:#fff;"></div>
<div class="a" style="left:1001px;top:725px;width:23px;height:18px;background:#fff;"></div>
<svg class="a" style="left:27px;top:730.7px" width="13" height="11" viewBox="0 0 13 11"><rect width="13" height="11" fill="#6db545"/><polyline points="2.60,9.50 4.30,7.20 5.50,8.70 6.70,6.10 7.60,6.90 10.30,2.80" fill="none" stroke="#f2f8ec" stroke-width="1.15" stroke-linejoin="round" stroke-linecap="round"/><circle cx="10.50" cy="2.5" r="1.0" fill="#f2f8ec"/></svg>
<svg class="a" style="left:1007px;top:730.7px" width="11" height="11" viewBox="0 0 11 11"><rect width="11" height="11" fill="#6db545"/><polyline points="2.20,9.50 3.64,7.20 4.65,8.70 5.67,6.10 6.43,6.90 8.72,2.80" fill="none" stroke="#f2f8ec" stroke-width="1.15" stroke-linejoin="round" stroke-linecap="round"/><circle cx="8.88" cy="2.5" r="1.0" fill="#f2f8ec"/></svg>
<div class="c" style="left:46px;top:726.70px;width:51px;">9,837</div>
<div class="c" style="left:98px;top:726.70px;width:42px;">-10,434</div>
<div class="c" style="left:141px;top:726.70px;width:56px;">3,49,392</div>
<div class="c" style="left:198px;top:726.70px;width:32px;">5.87</div>
<div class="c" style="left:231px;top:726.70px;width:43px;"><span class="k">251.35</span></div>
<div class="c g" style="left:275px;top:726.70px;width:42px;">74.10</div>
<div class="c" style="left:318px;top:726.70px;width:43px;">750</div>
<div class="c" style="left:362px;top:726.70px;width:43px;">250.00</div>
<div class="c" style="left:406px;top:726.70px;width:41px;">251.70</div>
<div class="c" style="left:448px;top:726.70px;width:43px;">100</div>
<div class="c" style="left:492px;top:726.70px;width:62px;"><span class="k">19,300.00</span></div>
<div class="c" style="left:555px;top:726.70px;width:44px;">1,000</div>
<div class="c" style="left:600px;top:726.70px;width:41px;">20.80</div>
<div class="c" style="left:642px;top:726.70px;width:43px;">21.15</div>
<div class="c" style="left:686px;top:726.70px;width:43px;">950</div>
<div class="c r" style="left:730px;top:726.70px;width:42px;">-42.35</div>
<div class="c" style="left:773px;top:726.70px;width:43px;"><span class="k">21.15</span></div>
<div class="c" style="left:817px;top:726.70px;width:32px;">10.07</div>
<div class="c" style="left:850px;top:726.70px;width:56px;">21,18,517</div>
<div class="c" style="left:907px;top:726.70px;width:41px;">27,477</div>
<div class="c" style="left:949px;top:726.70px;width:51px;">80,793</div>
<div class="a" style="left:23px;top:744px;width:22px;height:17px;background:#fff;"></div>
<div class="a" style="left:46px;top:744px;width:51px;height:17px;background:#f0eed8;"></div>
<div class="a" style="left:98px;top:744px;width:42px;height:17px;background:#f0eed8;"></div>
<div class="a" style="left:141px;top:744px;width:56px;height:17px;background:#f0eed8;"></div>
<div class="a" style="left:198px;top:744px;width:32px;height:17px;background:#f0eed8;"></div>
<div class="a" style="left:231px;top:744px;width:43px;height:17px;background:#f0eed8;"></div>
<div class="a" style="left:275px;top:744px;width:42px;height:17px;background:#f0eed8;"></div>
<div class="a" style="left:318px;top:744px;width:43px;height:17px;background:#f0eed8;"></div>
<div class="a" style="left:362px;top:744px;width:43px;height:17px;background:#f0eed8;"></div>
<div class="a" style="left:406px;top:744px;width:41px;height:17px;background:#f0eed8;"></div>
<div class="a" style="left:448px;top:744px;width:43px;height:17px;background:#f0eed8;"></div>
<div class="a" style="left:492px;top:744px;width:62px;height:17px;background:#fff;"></div>
<div class="a" style="left:555px;top:744px;width:44px;height:17px;background:#fff;"></div>
<div class="a" style="left:600px;top:744px;width:41px;height:17px;background:#fff;"></div>
<div class="a" style="left:642px;top:744px;width:43px;height:17px;background:#fff;"></div>
<div class="a" style="left:686px;top:744px;width:43px;height:17px;background:#fff;"></div>
<div class="a" style="left:730px;top:744px;width:42px;height:17px;background:#fff;"></div>
<div class="a" style="left:773px;top:744px;width:43px;height:17px;background:#fff;"></div>
<div class="a" style="left:817px;top:744px;width:32px;height:17px;background:#fff;"></div>
<div class="a" style="left:850px;top:744px;width:56px;height:17px;background:#fff;"></div>
<div class="a" style="left:907px;top:744px;width:41px;height:17px;background:#fff;"></div>
<div class="a" style="left:949px;top:744px;width:51px;height:17px;background:#fff;"></div>
<div class="a" style="left:1001px;top:744px;width:23px;height:17px;background:#fff;"></div>
<svg class="a" style="left:27px;top:748.7px" width="13" height="11" viewBox="0 0 13 11"><rect width="13" height="11" fill="#6db545"/><polyline points="2.60,9.50 4.30,7.20 5.50,8.70 6.70,6.10 7.60,6.90 10.30,2.80" fill="none" stroke="#f2f8ec" stroke-width="1.15" stroke-linejoin="round" stroke-linecap="round"/><circle cx="10.50" cy="2.5" r="1.0" fill="#f2f8ec"/></svg>
<svg class="a" style="left:1007px;top:748.7px" width="11" height="11" viewBox="0 0 11 11"><rect width="11" height="11" fill="#6db545"/><polyline points="2.20,9.50 3.64,7.20 4.65,8.70 5.67,6.10 6.43,6.90 8.72,2.80" fill="none" stroke="#f2f8ec" stroke-width="1.15" stroke-linejoin="round" stroke-linecap="round"/><circle cx="8.88" cy="2.5" r="1.0" fill="#f2f8ec"/></svg>
<div class="c" style="left:46px;top:745.70px;width:51px;">5,633</div>
<div class="c" style="left:98px;top:745.70px;width:42px;">-7,960</div>
<div class="c" style="left:141px;top:745.70px;width:56px;">2,95,314</div>
<div class="c" style="left:198px;top:745.70px;width:32px;">6.64</div>
<div class="c" style="left:231px;top:745.70px;width:43px;"><span class="k">208.00</span></div>
<div class="c g" style="left:275px;top:745.70px;width:42px;">62.65</div>
<div class="c" style="left:318px;top:745.70px;width:43px;">200</div>
<div class="c" style="left:362px;top:745.70px;width:43px;">207.10</div>
<div class="c" style="left:406px;top:745.70px;width:41px;">208.90</div>
<div class="c" style="left:448px;top:745.70px;width:43px;">550</div>
<div class="c" style="left:492px;top:745.70px;width:62px;"><span class="k">19,350.00</span></div>
<div class="c" style="left:555px;top:745.70px;width:44px;">2,400</div>
<div class="c" style="left:600px;top:745.70px;width:41px;">28.15</div>
<div class="c" style="left:642px;top:745.70px;width:43px;">28.60</div>
<div class="c" style="left:686px;top:745.70px;width:43px;">1,350</div>
<div class="c r" style="left:730px;top:745.70px;width:42px;">-54.10</div>
<div class="c" style="left:773px;top:745.70px;width:43px;"><span class="k">28.60</span></div>
<div class="c" style="left:817px;top:745.70px;width:32px;">9.80</div>
<div class="c" style="left:850px;top:745.70px;width:56px;">17,43,633</div>
<div class="c" style="left:907px;top:745.70px;width:41px;">28,913</div>
<div class="c" style="left:949px;top:745.70px;width:51px;">47,879</div>
<div class="a" style="left:23px;top:762px;width:22px;height:18px;background:#fff;"></div>
<div class="a" style="left:46px;top:762px;width:51px;height:18px;background:#f0eed8;"></div>
<div class="a" style="left:98px;top:762px;width:42px;height:18px;background:#f0eed8;"></div>
<div class="a" style="left:141px;top:762px;width:56px;height:18px;background:#f0eed8;"></div>
<div class="a" style="left:198px;top:762px;width:32px;height:18px;background:#f0eed8;"></div>
<div class="a" style="left:231px;top:762px;width:43px;height:18px;background:#f0eed8;"></div>
<div class="a" style="left:275px;top:762px;width:42px;height:18px;background:#f0eed8;"></div>
<div class="a" style="left:318px;top:762px;width:43px;height:18px;background:#f0eed8;"></div>
<div class="a" style="left:362px;top:762px;width:43px;height:18px;background:#f0eed8;"></div>
<div class="a" style="left:406px;top:762px;width:41px;height:18px;background:#f0eed8;"></div>
<div class="a" style="left:448px;top:762px;width:43px;height:18px;background:#f0eed8;"></div>
<div class="a" style="left:492px;top:762px;width:62px;height:18px;background:#fff;"></div>
<div class="a" style="left:555px;top:762px;width:44px;height:18px;background:#fff;"></div>
<div class="a" style="left:600px;top:762px;width:41px;height:18px;background:#fff;"></div>
<div class="a" style="left:642px;top:762px;width:43px;height:18px;background:#fff;"></div>
<div class="a" style="left:686px;top:762px;width:43px;height:18px;background:#fff;"></div>
<div class="a" style="left:730px;top:762px;width:42px;height:18px;background:#fff;"></div>
<div class="a" style="left:773px;top:762px;width:43px;height:18px;background:#fff;"></div>
<div class="a" style="left:817px;top:762px;width:32px;height:18px;background:#fff;"></div>
<div class="a" style="left:850px;top:762px;width:56px;height:18px;background:#fff;"></div>
<div class="a" style="left:907px;top:762px;width:41px;height:18px;background:#fff;"></div>
<div class="a" style="left:949px;top:762px;width:51px;height:18px;background:#fff;"></div>
<div class="a" style="left:1001px;top:762px;width:23px;height:18px;background:#fff;"></div>
<svg class="a" style="left:27px;top:767.7px" width="13" height="11" viewBox="0 0 13 11"><rect width="13" height="11" fill="#6db545"/><polyline points="2.60,9.50 4.30,7.20 5.50,8.70 6.70,6.10 7.60,6.90 10.30,2.80" fill="none" stroke="#f2f8ec" stroke-width="1.15" stroke-linejoin="round" stroke-linecap="round"/><circle cx="10.50" cy="2.5" r="1.0" fill="#f2f8ec"/></svg>
<svg class="a" style="left:1007px;top:767.7px" width="11" height="11" viewBox="0 0 11 11"><rect width="11" height="11" fill="#6db545"/><polyline points="2.20,9.50 3.64,7.20 4.65,8.70 5.67,6.10 6.43,6.90 8.72,2.80" fill="none" stroke="#f2f8ec" stroke-width="1.15" stroke-linejoin="round" stroke-linecap="round"/><circle cx="8.88" cy="2.5" r="1.0" fill="#f2f8ec"/></svg>
<div class="c" style="left:46px;top:763.70px;width:51px;">35,667</div>
<div class="c" style="left:98px;top:763.70px;width:42px;">-56,076</div>
<div class="c" style="left:141px;top:763.70px;width:56px;">16,04,492</div>
<div class="c" style="left:198px;top:763.70px;width:32px;">7.02</div>
<div class="c" style="left:231px;top:763.70px;width:43px;"><span class="k">168.05</span></div>
<div class="c g" style="left:275px;top:763.70px;width:42px;">51.15</div>
<div class="c" style="left:318px;top:763.70px;width:43px;">100</div>
<div class="c" style="left:362px;top:763.70px;width:43px;">167.95</div>
<div class="c" style="left:406px;top:763.70px;width:41px;">170.00</div>
<div class="c" style="left:448px;top:763.70px;width:43px;">1,050</div>
<div class="c" style="left:492px;top:763.70px;width:62px;"><span class="k">19,400.00</span></div>
<div class="c" style="left:555px;top:763.70px;width:44px;">50</div>
<div class="c" style="left:600px;top:763.70px;width:41px;">38.80</div>
<div class="c" style="left:642px;top:763.70px;width:43px;">39.10</div>
<div class="c" style="left:686px;top:763.70px;width:43px;">900</div>
<div class="c r" style="left:730px;top:763.70px;width:42px;">-62.90</div>
<div class="c" style="left:773px;top:763.70px;width:43px;"><span class="k">39.00</span></div>
<div class="c" style="left:817px;top:763.70px;width:32px;">9.61</div>
<div class="c" style="left:850px;top:763.70px;width:56px;">36,45,991</div>
<div class="c" style="left:907px;top:763.70px;width:41px;">42,262</div>
<div class="c" style="left:949px;top:763.70px;width:51px;">1,30,437</div>
<div class="a" style="left:23px;top:781px;width:22px;height:18px;background:#fff;"></div>
<div class="a" style="left:46px;top:781px;width:51px;height:18px;background:#f0eed8;"></div>
<div class="a" style="left:98px;top:781px;width:42px;height:18px;background:#f0eed8;"></div>
<div class="a" style="left:141px;top:781px;width:56px;height:18px;background:#f0eed8;"></div>
<div class="a" style="left:198px;top:781px;width:32px;height:18px;background:#f0eed8;"></div>
<div class="a" style="left:231px;top:781px;width:43px;height:18px;background:#f0eed8;"></div>
<div class="a" style="left:275px;top:781px;width:42px;height:18px;background:#f0eed8;"></div>
<div class="a" style="left:318px;top:781px;width:43px;height:18px;background:#f0eed8;"></div>
<div class="a" style="left:362px;top:781px;width:43px;height:18px;background:#f0eed8;"></div>
<div class="a" style="left:406px;top:781px;width:41px;height:18px;background:#f0eed8;"></div>
<div class="a" style="left:448px;top:781px;width:43px;height:18px;background:#f0eed8;"></div>
<div class="a" style="left:492px;top:781px;width:62px;height:18px;background:#fff;"></div>
<div class="a" style="left:555px;top:781px;width:44px;height:18px;background:#fff;"></div>
<div class="a" style="left:600px;top:781px;width:41px;height:18px;background:#fff;"></div>
<div class="a" style="left:642px;top:781px;width:43px;height:18px;background:#fff;"></div>
<div class="a" style="left:686px;top:781px;width:43px;height:18px;background:#fff;"></div>
<div class="a" style="left:730px;top:781px;width:42px;height:18px;background:#fff;"></div>
<div class="a" style="left:773px;top:781px;width:43px;height:18px;background:#fff;"></div>
<div class="a" style="left:817px;top:781px;width:32px;height:18px;background:#fff;"></div>
<div class="a" style="left:850px;top:781px;width:56px;height:18px;background:#fff;"></div>
<div class="a" style="left:907px;top:781px;width:41px;height:18px;background:#fff;"></div>
<div class="a" style="left:949px;top:781px;width:51px;height:18px;background:#fff;"></div>
<div class="a" style="left:1001px;top:781px;width:23px;height:18px;background:#fff;"></div>
<svg class="a" style="left:27px;top:786.7px" width="13" height="11" viewBox="0 0 13 11"><rect width="13" height="11" fill="#6db545"/><polyline points="2.60,9.50 4.30,7.20 5.50,8.70 6.70,6.10 7.60,6.90 10.30,2.80" fill="none" stroke="#f2f8ec" stroke-width="1.15" stroke-linejoin="round" stroke-linecap="round"/><circle cx="10.50" cy="2.5" r="1.0" fill="#f2f8ec"/></svg>
<svg class="a" style="left:1007px;top:786.7px" width="11" height="11" viewBox="0 0 11 11"><rect width="11" height="11" fill="#6db545"/><polyline points="2.20,9.50 3.64,7.20 4.65,8.70 5.67,6.10 6.43,6.90 8.72,2.80" fill="none" stroke="#f2f8ec" stroke-width="1.15" stroke-linejoin="round" stroke-linecap="round"/><circle cx="8.88" cy="2.5" r="1.0" fill="#f2f8ec"/></svg>
<div class="c" style="left:46px;top:782.70px;width:51px;">21,568</div>
<div class="c" style="left:98px;top:782.70px;width:42px;">-3,343</div>
<div class="c" style="left:141px;top:782.70px;width:56px;">17,99,488</div>
<div class="c" style="left:198px;top:782.70px;width:32px;">7.33</div>
<div class="c" style="left:231px;top:782.70px;width:43px;"><span class="k">132.90</span></div>
<div class="c g" style="left:275px;top:782.70px;width:42px;">40.85</div>
<div class="c" style="left:318px;top:782.70px;width:43px;">700</div>
<div class="c" style="left:362px;top:782.70px;width:43px;">132.90</div>
<div class="c" style="left:406px;top:782.70px;width:41px;">133.60</div>
<div class="c" style="left:448px;top:782.70px;width:43px;">150</div>
<div class="c" style="left:492px;top:782.70px;width:62px;"><span class="k">19,450.00</span></div>
<div class="c" style="left:555px;top:782.70px;width:44px;">1,200</div>
<div class="c" style="left:600px;top:782.70px;width:41px;">52.85</div>
<div class="c" style="left:642px;top:782.70px;width:43px;">53.40</div>
<div class="c" style="left:686px;top:782.70px;width:43px;">1,200</div>
<div class="c r" style="left:730px;top:782.70px;width:42px;">-74.25</div>
<div class="c" style="left:773px;top:782.70px;width:43px;"><span class="k">53.35</span></div>
<div class="c" style="left:817px;top:782.70px;width:32px;">9.51</div>
<div class="c" style="left:850px;top:782.70px;width:56px;">28,91,472</div>
<div class="c" style="left:907px;top:782.70px;width:41px;">44,482</div>
<div class="c" style="left:949px;top:782.70px;width:51px;">55,746</div>
<div class="a" style="left:23px;top:800px;width:22px;height:17px;background:#fff;"></div>
<div class="a" style="left:46px;top:800px;width:51px;height:17px;background:#f0eed8;"></div>
<div class="a" style="left:98px;top:800px;width:42px;height:17px;background:#f0eed8;"></div>
<div class="a" style="left:141px;top:800px;width:56px;height:17px;background:#f0eed8;"></div>
<div class="a" style="left:198px;top:800px;width:32px;height:17px;background:#f0eed8;"></div>
<div class="a" style="left:231px;top:800px;width:43px;height:17px;background:#f0eed8;"></div>
<div class="a" style="left:275px;top:800px;width:42px;height:17px;background:#f0eed8;"></div>
<div class="a" style="left:318px;top:800px;width:43px;height:17px;background:#f0eed8;"></div>
<div class="a" style="left:362px;top:800px;width:43px;height:17px;background:#f0eed8;"></div>
<div class="a" style="left:406px;top:800px;width:41px;height:17px;background:#f0eed8;"></div>
<div class="a" style="left:448px;top:800px;width:43px;height:17px;background:#f0eed8;"></div>
<div class="a" style="left:492px;top:800px;width:62px;height:17px;background:#fff;"></div>
<div class="a" style="left:555px;top:800px;width:44px;height:17px;background:#fff;"></div>
<div class="a" style="left:600px;top:800px;width:41px;height:17px;background:#fff;"></div>
<div class="a" style="left:642px;top:800px;width:43px;height:17px;background:#fff;"></div>
<div class="a" style="left:686px;top:800px;width:43px;height:17px;background:#fff;"></div>
<div class="a" style="left:730px;top:800px;width:42px;height:17px;background:#fff;"></div>
<div class="a" style="left:773px;top:800px;width:43px;height:17px;background:#fff;"></div>
<div class="a" style="left:817px;top:800px;width:32px;height:17px;background:#fff;"></div>
<div class="a" style="left:850px;top:800px;width:56px;height:17px;background:#fff;"></div>
<div class="a" style="left:907px;top:800px;width:41px;height:17px;background:#fff;"></div>
<div class="a" style="left:949px;top:800px;width:51px;height:17px;background:#fff;"></div>
<div class="a" style="left:1001px;top:800px;width:23px;height:17px;background:#fff;"></div>
<svg class="a" style="left:27px;top:804.7px" width="13" height="11" viewBox="0 0 13 11"><rect width="13" height="11" fill="#6db545"/><polyline points="2.60,9.50 4.30,7.20 5.50,8.70 6.70,6.10 7.60,6.90 10.30,2.80" fill="none" stroke="#f2f8ec" stroke-width="1.15" stroke-linejoin="round" stroke-linecap="round"/><circle cx="10.50" cy="2.5" r="1.0" fill="#f2f8ec"/></svg>
<svg class="a" style="left:1007px;top:804.7px" width="11" height="11" viewBox="0 0 11 11"><rect width="11" height="11" fill="#6db545"/><polyline points="2.20,9.50 3.64,7.20 4.65,8.70 5.67,6.10 6.43,6.90 8.72,2.80" fill="none" stroke="#f2f8ec" stroke-width="1.15" stroke-linejoin="round" stroke-linecap="round"/><circle cx="8.88" cy="2.5" r="1.0" fill="#f2f8ec"/></svg>
<div class="c" style="left:46px;top:801.70px;width:51px;">1,02,587</div>
<div class="c" style="left:98px;top:801.70px;width:42px;">-7,182</div>
<div class="c" style="left:141px;top:801.70px;width:56px;">54,09,237</div>
<div class="c" style="left:198px;top:801.70px;width:32px;">7.57</div>
<div class="c" style="left:231px;top:801.70px;width:43px;"><span class="k">102.55</span></div>
<div class="c g" style="left:275px;top:801.70px;width:42px;">32.50</div>
<div class="c" style="left:318px;top:801.70px;width:43px;">1,350</div>
<div class="c" style="left:362px;top:801.70px;width:43px;">102.00</div>
<div class="c" style="left:406px;top:801.70px;width:41px;">102.95</div>
<div class="c" style="left:448px;top:801.70px;width:43px;">100</div>
<div class="c" style="left:492px;top:801.70px;width:62px;"><span class="k">19,500.00</span></div>
<div class="c" style="left:555px;top:801.70px;width:44px;">4,450</div>
<div class="c" style="left:600px;top:801.70px;width:41px;">72.30</div>
<div class="c" style="left:642px;top:801.70px;width:43px;">73.00</div>
<div class="c" style="left:686px;top:801.70px;width:43px;">1,600</div>
<div class="c r" style="left:730px;top:801.70px;width:42px;">-82.70</div>
<div class="c" style="left:773px;top:801.70px;width:43px;"><span class="k">72.85</span></div>
<div class="c" style="left:817px;top:801.70px;width:32px;">9.57</div>
<div class="c" style="left:850px;top:801.70px;width:56px;">45,81,620</div>
<div class="c" style="left:907px;top:801.70px;width:41px;">71,169</div>
<div class="c" style="left:949px;top:801.70px;width:51px;">1,10,993</div>
<div class="a" style="left:23px;top:818px;width:22px;height:18px;background:#fff;"></div>
<div class="a" style="left:46px;top:818px;width:51px;height:18px;background:#fff;"></div>
<div class="a" style="left:98px;top:818px;width:42px;height:18px;background:#fff;"></div>
<div class="a" style="left:141px;top:818px;width:56px;height:18px;background:#fff;"></div>
<div class="a" style="left:198px;top:818px;width:32px;height:18px;background:#fff;"></div>
<div class="a" style="left:231px;top:818px;width:43px;height:18px;background:#fff;"></div>
<div class="a" style="left:275px;top:818px;width:42px;height:18px;background:#fff;"></div>
<div class="a" style="left:318px;top:818px;width:43px;height:18px;background:#fff;"></div>
<div class="a" style="left:362px;top:818px;width:43px;height:18px;background:#fff;"></div>
<div class="a" style="left:406px;top:818px;width:41px;height:18px;background:#fff;"></div>
<div class="a" style="left:448px;top:818px;width:43px;height:18px;background:#fff;"></div>
<div class="a" style="left:492px;top:818px;width:62px;height:18px;background:#fff;"></div>
<div class="a" style="left:555px;top:818px;width:44px;height:18px;background:#f0eed8;"></div>
<div class="a" style="left:600px;top:818px;width:41px;height:18px;background:#f0eed8;"></div>
<div class="a" style="left:642px;top:818px;width:43px;height:18px;background:#f0eed8;"></div>
<div class="a" style="left:686px;top:818px;width:43px;height:18px;background:#f0eed8;"></div>
<div class="a" style="left:730px;top:818px;width:42px;height:18px;background:#f0eed8;"></div>
<div class="a" style="left:773px;top:818px;width:43px;height:18px;background:#f0eed8;"></div>
<div class="a" style="left:817px;top:818px;width:32px;height:18px;background:#f0eed8;"></div>
<div class="a" style="left:850px;top:818px;width:56px;height:18px;background:#f0eed8;"></div>
<div class="a" style="left:907px;top:818px;width:41px;height:18px;background:#f0eed8;"></div>
<div class="a" style="left:949px;top:818px;width:51px;height:18px;background:#f0eed8;"></div>
<div class="a" style="left:1001px;top:818px;width:23px;height:18px;background:#fff;"></div>
<svg class="a" style="left:27px;top:823.7px" width="13" height="11" viewBox="0 0 13 11"><rect width="13" height="11" fill="#6db545"/><polyline points="2.60,9.50 4.30,7.20 5.50,8.70 6.70,6.10 7.60,6.90 10.30,2.80" fill="none" stroke="#f2f8ec" stroke-width="1.15" stroke-linejoin="round" stroke-linecap="round"/><circle cx="10.50" cy="2.5" r="1.0" fill="#f2f8ec"/></svg>
<svg class="a" style="left:1007px;top:823.7px" width="11" height="11" viewBox="0 0 11 11"><rect width="11" height="11" fill="#6db545"/><polyline points="2.20,9.50 3.64,7.20 4.65,8.70 5.67,6.10 6.43,6.90 8.72,2.80" fill="none" stroke="#f2f8ec" stroke-width="1.15" stroke-linejoin="round" stroke-linecap="round"/><circle cx="8.88" cy="2.5" r="1.0" fill="#f2f8ec"/></svg>
<div class="c" style="left:46px;top:819.70px;width:51px;">57,497</div>
<div class="c" style="left:98px;top:819.70px;width:42px;">27,196</div>
<div class="c" style="left:141px;top:819.70px;width:56px;">27,38,600</div>
<div class="c" style="left:198px;top:819.70px;width:32px;">7.73</div>
<div class="c" style="left:231px;top:819.70px;width:43px;"><span class="k">76.75</span></div>
<div class="c g" style="left:275px;top:819.70px;width:42px;">24.05</div>
<div class="c" style="left:318px;top:819.70px;width:43px;">150</div>
<div class="c" style="left:362px;top:819.70px;width:43px;">76.40</div>
<div class="c" style="left:406px;top:819.70px;width:41px;">76.75</div>
<div class="c" style="left:448px;top:819.70px;width:43px;">850</div>
<div class="c" style="left:492px;top:819.70px;width:62px;"><span class="k">19,550.00</span></div>
<div class="c" style="left:555px;top:819.70px;width:44px;">1,800</div>
<div class="c" style="left:600px;top:819.70px;width:41px;">96.55</div>
<div class="c" style="left:642px;top:819.70px;width:43px;">96.95</div>
<div class="c" style="left:686px;top:819.70px;width:43px;">50</div>
<div class="c r" style="left:730px;top:819.70px;width:42px;">-90.60</div>
<div class="c" style="left:773px;top:819.70px;width:43px;"><span class="k">97.00</span></div>
<div class="c" style="left:817px;top:819.70px;width:32px;">9.67</div>
<div class="c" style="left:850px;top:819.70px;width:56px;">10,64,021</div>
<div class="c" style="left:907px;top:819.70px;width:41px;">14,297</div>
<div class="c" style="left:949px;top:819.70px;width:51px;">19,943</div>
<div class="a" style="left:23px;top:837px;width:22px;height:17px;background:#fff;"></div>
<div class="a" style="left:46px;top:837px;width:51px;height:17px;background:#fff;"></div>
<div class="a" style="left:98px;top:837px;width:42px;height:17px;background:#fff;"></div>
<div class="a" style="left:141px;top:837px;width:56px;height:17px;background:#fff;"></div>
<div class="a" style="left:198px;top:837px;width:32px;height:17px;background:#fff;"></div>
<div class="a" style="left:231px;top:837px;width:43px;height:17px;background:#fff;"></div>
<div class="a" style="left:275px;top:837px;width:42px;height:17px;background:#fff;"></div>
<div class="a" style="left:318px;top:837px;width:43px;height:17px;background:#fff;"></div>
<div class="a" style="left:362px;top:837px;width:43px;height:17px;background:#fff;"></div>
<div class="a" style="left:406px;top:837px;width:41px;height:17px;background:#fff;"></div>
<div class="a" style="left:448px;top:837px;width:43px;height:17px;background:#fff;"></div>
<div class="a" style="left:492px;top:837px;width:62px;height:17px;background:#fff;"></div>
<div class="a" style="left:555px;top:837px;width:44px;height:17px;background:#f0eed8;"></div>
<div class="a" style="left:600px;top:837px;width:41px;height:17px;background:#f0eed8;"></div>
<div class="a" style="left:642px;top:837px;width:43px;height:17px;background:#f0eed8;"></div>
<div class="a" style="left:686px;top:837px;width:43px;height:17px;background:#f0eed8;"></div>
<div class="a" style="left:730px;top:837px;width:42px;height:17px;background:#f0eed8;"></div>
<div class="a" style="left:773px;top:837px;width:43px;height:17px;background:#f0eed8;"></div>
<div class="a" style="left:817px;top:837px;width:32px;height:17px;background:#f0eed8;"></div>
<div class="a" style="left:850px;top:837px;width:56px;height:17px;background:#f0eed8;"></div>
<div class="a" style="left:907px;top:837px;width:41px;height:17px;background:#f0eed8;"></div>
<div class="a" style="left:949px;top:837px;width:51px;height:17px;background:#f0eed8;"></div>
<div class="a" style="left:1001px;top:837px;width:23px;height:17px;background:#fff;"></div>
<svg class="a" style="left:27px;top:841.7px" width="13" height="11" viewBox="0 0 13 11"><rect width="13" height="11" fill="#6db545"/><polyline points="2.60,9.50 4.30,7.20 5.50,8.70 6.70,6.10 7.60,6.90 10.30,2.80" fill="none" stroke="#f2f8ec" stroke-width="1.15" stroke-linejoin="round" stroke-linecap="round"/><circle cx="10.50" cy="2.5" r="1.0" fill="#f2f8ec"/></svg>
<svg class="a" style="left:1007px;top:841.7px" width="11" height="11" viewBox="0 0 11 11"><rect width="11" height="11" fill="#6db545"/><polyline points="2.20,9.50 3.64,7.20 4.65,8.70 5.67,6.10 6.43,6.90 8.72,2.80" fill="none" stroke="#f2f8ec" stroke-width="1.15" stroke-linejoin="round" stroke-linecap="round"/><circle cx="8.88" cy="2.5" r="1.0" fill="#f2f8ec"/></svg>
<div class="c" style="left:46px;top:838.70px;width:51px;">1,32,276</div>
<div class="c" style="left:98px;top:838.70px;width:42px;">60,160</div>
<div class="c" style="left:141px;top:838.70px;width:56px;">32,43,316</div>
<div class="c" style="left:198px;top:838.70px;width:32px;">7.76</div>
<div class="c" style="left:231px;top:838.70px;width:43px;"><span class="k">54.75</span></div>
<div class="c g" style="left:275px;top:838.70px;width:42px;">16.05</div>
<div class="c" style="left:318px;top:838.70px;width:43px;">500</div>
<div class="c" style="left:362px;top:838.70px;width:43px;">54.75</div>
<div class="c" style="left:406px;top:838.70px;width:41px;">55.00</div>
<div class="c" style="left:448px;top:838.70px;width:43px;">4,500</div>
<div class="c" style="left:492px;top:838.70px;width:62px;"><span class="k">19,600.00</span></div>
<div class="c" style="left:555px;top:838.70px;width:44px;">50</div>
<div class="c" style="left:600px;top:838.70px;width:41px;">123.90</div>
<div class="c" style="left:642px;top:838.70px;width:43px;">125.05</div>
<div class="c" style="left:686px;top:838.70px;width:43px;">50</div>
<div class="c r" style="left:730px;top:838.70px;width:42px;">-98.50</div>
<div class="c" style="left:773px;top:838.70px;width:43px;"><span class="k">124.00</span></div>
<div class="c" style="left:817px;top:838.70px;width:32px;">9.65</div>
<div class="c" style="left:850px;top:838.70px;width:56px;">9,67,947</div>
<div class="c" style="left:907px;top:838.70px;width:41px;">7,360</div>
<div class="c" style="left:949px;top:838.70px;width:51px;">26,127</div>
<div class="a" style="left:23px;top:855px;width:22px;height:18px;background:#fff;"></div>
<div class="a" style="left:46px;top:855px;width:51px;height:18px;background:#fff;"></div>
<div class="a" style="left:98px;top:855px;width:42px;height:18px;background:#fff;"></div>
<div class="a" style="left:141px;top:855px;width:56px;height:18px;background:#fff;"></div>
<div class="a" style="left:198px;top:855px;width:32px;height:18px;background:#fff;"></div>
<div class="a" style="left:231px;top:855px;width:43px;height:18px;background:#fff;"></div>
<div class="a" style="left:275px;top:855px;width:42px;height:18px;background:#fff;"></div>
<div class="a" style="left:318px;top:855px;width:43px;height:18px;background:#fff;"></div>
<div class="a" style="left:362px;top:855px;width:43px;height:18px;background:#fff;"></div>
<div class="a" style="left:406px;top:855px;width:41px;height:18px;background:#fff;"></div>
<div class="a" style="left:448px;top:855px;width:43px;height:18px;background:#fff;"></div>
<div class="a" style="left:492px;top:855px;width:62px;height:18px;background:#fff;"></div>
<div class="a" style="left:555px;top:855px;width:44px;height:18px;background:#f0eed8;"></div>
<div class="a" style="left:600px;top:855px;width:41px;height:18px;background:#f0eed8;"></div>
<div class="a" style="left:642px;top:855px;width:43px;height:18px;background:#f0eed8;"></div>
<div class="a" style="left:686px;top:855px;width:43px;height:18px;background:#f0eed8;"></div>
<div class="a" style="left:730px;top:855px;width:42px;height:18px;background:#f0eed8;"></div>
<div class="a" style="left:773px;top:855px;width:43px;height:18px;background:#f0eed8;"></div>
<div class="a" style="left:817px;top:855px;width:32px;height:18px;background:#f0eed8;"></div>
<div class="a" style="left:850px;top:855px;width:56px;height:18px;background:#f0eed8;"></div>
<div class="a" style="left:907px;top:855px;width:41px;height:18px;background:#f0eed8;"></div>
<div class="a" style="left:949px;top:855px;width:51px;height:18px;background:#f0eed8;"></div>
<div class="a" style="left:1001px;top:855px;width:23px;height:18px;background:#fff;"></div>
<svg class="a" style="left:27px;top:860.7px" width="13" height="11" viewBox="0 0 13 11"><rect width="13" height="11" fill="#6db545"/><polyline points="2.60,9.50 4.30,7.20 5.50,8.70 6.70,6.10 7.60,6.90 10.30,2.80" fill="none" stroke="#f2f8ec" stroke-width="1.15" stroke-linejoin="round" stroke-linecap="round"/><circle cx="10.50" cy="2.5" r="1.0" fill="#f2f8ec"/></svg>
<svg class="a" style="left:1007px;top:860.7px" width="11" height="11" viewBox="0 0 11 11"><rect width="11" height="11" fill="#6db545"/><polyline points="2.20,9.50 3.64,7.20 4.65,8.70 5.67,6.10 6.43,6.90 8.72,2.80" fill="none" stroke="#f2f8ec" stroke-width="1.15" stroke-linejoin="round" stroke-linecap="round"/><circle cx="8.88" cy="2.5" r="1.0" fill="#f2f8ec"/></svg>
<div class="c" style="left:46px;top:856.70px;width:51px;">58,873</div>
<div class="c" style="left:98px;top:856.70px;width:42px;">18,356</div>
<div class="c" style="left:141px;top:856.70px;width:56px;">16,57,816</div>
<div class="c" style="left:198px;top:856.70px;width:32px;">7.84</div>
<div class="c" style="left:231px;top:856.70px;width:43px;"><span class="k">38.15</span></div>
<div class="c g" style="left:275px;top:856.70px;width:42px;">10.75</div>
<div class="c" style="left:318px;top:856.70px;width:43px;">100</div>
<div class="c" style="left:362px;top:856.70px;width:43px;">38.30</div>
<div class="c" style="left:406px;top:856.70px;width:41px;">38.50</div>
<div class="c" style="left:448px;top:856.70px;width:43px;">50</div>
<div class="c" style="left:492px;top:856.70px;width:62px;"><span class="k">19,650.00</span></div>
<div class="c" style="left:555px;top:856.70px;width:44px;">250</div>
<div class="c" style="left:600px;top:856.70px;width:41px;">157.10</div>
<div class="c" style="left:642px;top:856.70px;width:43px;">159.10</div>
<div class="c" style="left:686px;top:856.70px;width:43px;">250</div>
<div class="c r" style="left:730px;top:856.70px;width:42px;">-104.25</div>
<div class="c" style="left:773px;top:856.70px;width:43px;"><span class="k">157.40</span></div>
<div class="c" style="left:817px;top:856.70px;width:32px;">9.89</div>
<div class="c" style="left:850px;top:856.70px;width:56px;">1,66,896</div>
<div class="c" style="left:907px;top:856.70px;width:41px;">2,540</div>
<div class="c" style="left:949px;top:856.70px;width:51px;">5,837</div>
<div class="a" style="left:23px;top:874px;width:22px;height:18px;background:#fff;"></div>
<div class="a" style="left:46px;top:874px;width:51px;height:18px;background:#fff;"></div>
<div class="a" style="left:98px;top:874px;width:42px;height:18px;background:#fff;"></div>
<div class="a" style="left:141px;top:874px;width:56px;height:18px;background:#fff;"></div>
<div class="a" style="left:198px;top:874px;width:32px;height:18px;background:#fff;"></div>
<div class="a" style="left:231px;top:874px;width:43px;height:18px;background:#fff;"></div>
<div class="a" style="left:275px;top:874px;width:42px;height:18px;background:#fff;"></div>
<div class="a" style="left:318px;top:874px;width:43px;height:18px;background:#fff;"></div>
<div class="a" style="left:362px;top:874px;width:43px;height:18px;background:#fff;"></div>
<div class="a" style="left:406px;top:874px;width:41px;height:18px;background:#fff;"></div>
<div class="a" style="left:448px;top:874px;width:43px;height:18px;background:#fff;"></div>
<div class="a" style="left:492px;top:874px;width:62px;height:18px;background:#fff;"></div>
<div class="a" style="left:555px;top:874px;width:44px;height:18px;background:#f0eed8;"></div>
<div class="a" style="left:600px;top:874px;width:41px;height:18px;background:#f0eed8;"></div>
<div class="a" style="left:642px;top:874px;width:43px;height:18px;background:#f0eed8;"></div>
<div class="a" style="left:686px;top:874px;width:43px;height:18px;background:#f0eed8;"></div>
<div class="a" style="left:730px;top:874px;width:42px;height:18px;background:#f0eed8;"></div>
<div class="a" style="left:773px;top:874px;width:43px;height:18px;background:#f0eed8;"></div>
<div class="a" style="left:817px;top:874px;width:32px;height:18px;background:#f0eed8;"></div>
<div class="a" style="left:850px;top:874px;width:56px;height:18px;background:#f0eed8;"></div>
<div class="a" style="left:907px;top:874px;width:41px;height:18px;background:#f0eed8;"></div>
<div class="a" style="left:949px;top:874px;width:51px;height:18px;background:#f0eed8;"></div>
<div class="a" style="left:1001px;top:874px;width:23px;height:18px;background:#fff;"></div>
<svg class="a" style="left:27px;top:879.7px" width="13" height="11" viewBox="0 0 13 11"><rect width="13" height="11" fill="#6db545"/><polyline points="2.60,9.50 4.30,7.20 5.50,8.70 6.70,6.10 7.60,6.90 10.30,2.80" fill="none" stroke="#f2f8ec" stroke-width="1.15" stroke-linejoin="round" stroke-linecap="round"/><circle cx="10.50" cy="2.5" r="1.0" fill="#f2f8ec"/></svg>
<svg class="a" style="left:1007px;top:879.7px" width="11" height="11" viewBox="0 0 11 11"><rect width="11" height="11" fill="#6db545"/><polyline points="2.20,9.50 3.64,7.20 4.65,8.70 5.67,6.10 6.43,6.90 8.72,2.80" fill="none" stroke="#f2f8ec" stroke-width="1.15" stroke-linejoin="round" stroke-linecap="round"/><circle cx="8.88" cy="2.5" r="1.0" fill="#f2f8ec"/></svg>
<div class="c" style="left:46px;top:874.70px;width:51px;">1,00,166</div>
<div class="c" style="left:98px;top:874.70px;width:42px;">30,471</div>
<div class="c" style="left:141px;top:874.70px;width:56px;">30,91,406</div>
<div class="c" style="left:198px;top:874.70px;width:32px;">7.97</div>
<div class="c" style="left:231px;top:874.70px;width:43px;"><span class="k">25.40</span></div>
<div class="c g" style="left:275px;top:874.70px;width:42px;">5.75</div>
<div class="c" style="left:318px;top:874.70px;width:43px;">100</div>
<div class="c" style="left:362px;top:874.70px;width:43px;">25.40</div>
<div class="c" style="left:406px;top:874.70px;width:41px;">25.75</div>
<div class="c" style="left:448px;top:874.70px;width:43px;">1,500</div>
<div class="c" style="left:492px;top:874.70px;width:62px;"><span class="k">19,700.00</span></div>
<div class="c" style="left:555px;top:874.70px;width:44px;">100</div>
<div class="c" style="left:600px;top:874.70px;width:41px;">190.70</div>
<div class="c" style="left:642px;top:874.70px;width:43px;">195.00</div>
<div class="c" style="left:686px;top:874.70px;width:43px;">50</div>
<div class="c r" style="left:730px;top:874.70px;width:42px;">-100.70</div>
<div class="c" style="left:773px;top:874.70px;width:43px;"><span class="k">190.40</span></div>
<div class="c" style="left:817px;top:874.70px;width:32px;">10.04</div>
<div class="c" style="left:850px;top:874.70px;width:56px;">3,04,797</div>
<div class="c" style="left:907px;top:874.70px;width:41px;">400</div>
<div class="c" style="left:949px;top:874.70px;width:51px;">11,842</div>
</body></html>
